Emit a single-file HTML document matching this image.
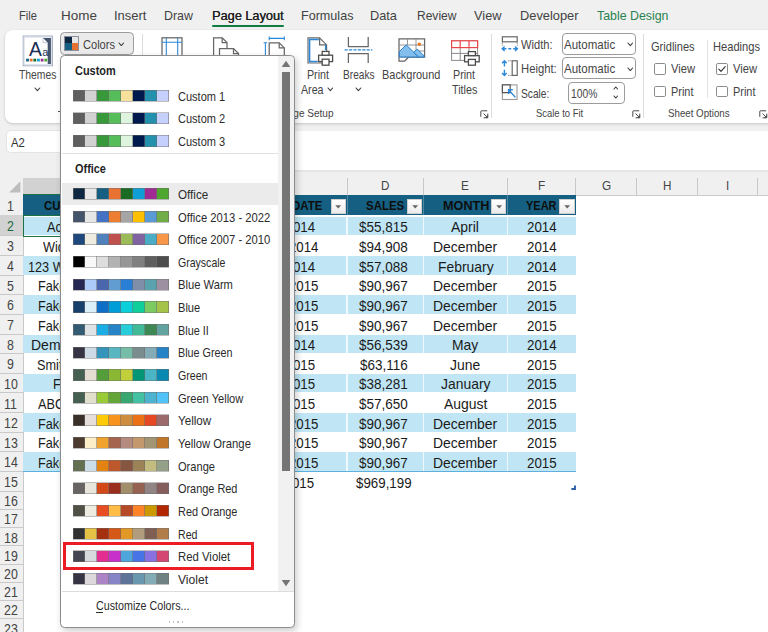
<!DOCTYPE html>
<html><head><meta charset="utf-8"><title>Excel Theme Colors</title>
<style>
html,body{margin:0;padding:0}
body{width:768px;height:632px;overflow:hidden;background:#f0f0f0;position:relative;font-family:"Liberation Sans",sans-serif}
.r{position:absolute;display:block}
.t{position:absolute;white-space:nowrap;display:block;transform-origin:0 50%}
</style></head><body>
<span class="t" style="left:18.70px;top:6.9px;font-size:13.2px;line-height:18px;transform:scaleX(0.8406);color:#424242;">File</span>
<span class="t" style="left:61.00px;top:6.9px;font-size:13.2px;line-height:18px;transform:scaleX(1.0215);color:#424242;">Home</span>
<span class="t" style="left:113.50px;top:6.9px;font-size:13.2px;line-height:18px;transform:scaleX(0.9848);color:#424242;">Insert</span>
<span class="t" style="left:164.00px;top:6.9px;font-size:13.2px;line-height:18px;transform:scaleX(0.9390);color:#424242;">Draw</span>
<span class="t" style="left:300.50px;top:6.9px;font-size:13.2px;line-height:18px;transform:scaleX(0.9538);color:#424242;">Formulas</span>
<span class="t" style="left:370.00px;top:6.9px;font-size:13.2px;line-height:18px;transform:scaleX(0.9679);color:#424242;">Data</span>
<span class="t" style="left:416.50px;top:6.9px;font-size:13.2px;line-height:18px;transform:scaleX(0.9115);color:#424242;">Review</span>
<span class="t" style="left:474.00px;top:6.9px;font-size:13.2px;line-height:18px;transform:scaleX(0.9686);color:#424242;">View</span>
<span class="t" style="left:519.50px;top:6.9px;font-size:13.2px;line-height:18px;transform:scaleX(0.9726);color:#424242;">Developer</span>
<span class="t" style="left:212.00px;top:6.9px;font-size:13.2px;line-height:18px;transform:scaleX(0.9650);color:#1f1f1f;text-shadow:0.3px 0 0 #1f1f1f;">Page Layout</span>
<div class="r" style="left:212.0px;top:25.3px;width:72.0px;height:2.0px;background:#107c41;border-radius:1px;"></div>
<span class="t" style="left:596.50px;top:6.9px;font-size:13.2px;line-height:18px;transform:scaleX(0.9367);color:#2a8250;">Table Design</span>
<div class="r" style="left:5.3px;top:29.5px;width:794.7px;height:93.5px;background:#ffffff;border-radius:8px 0 0 8px;box-shadow:0 1px 3px rgba(0,0,0,0.18);"></div>
<svg class="r" style="left:22px;top:34.5px" width="32" height="32" viewBox="0 0 32 32">
<rect x="1.2" y="1" width="29.2" height="29.8" fill="#f4f6fa" stroke="#a3adc2" stroke-width="1"/>
<rect x="2.2" y="2" width="27.2" height="27.8" fill="none" stroke="#d5dae5" stroke-width="0.9"/>
<rect x="2.8" y="3" width="23" height="26" fill="#ffffff"/>
<path d="M21 3 H28.9 V29 H25.7 V7.7 Z" fill="#44546a"/>
<path d="M21 3 V7.7 H25.7 Z" fill="#ffffff" stroke="#8a94a8" stroke-width="0.5"/>
<text x="7" y="21.3" font-family="Liberation Sans, sans-serif" font-size="19.3" fill="#1b2f55">A</text>
<text x="20.2" y="21.3" font-family="Liberation Sans, sans-serif" font-size="11" fill="#1b2f55">a</text>
<rect x="4.1" y="23.7" width="2.8" height="2.8" fill="#156082"/><rect x="7.75" y="23.7" width="2.8" height="2.8" fill="#e97132"/>
<rect x="11.4" y="23.7" width="2.8" height="2.8" fill="#196b24"/><rect x="15.05" y="23.7" width="2.8" height="2.8" fill="#0f9ed5"/>
<rect x="18.7" y="23.7" width="2.8" height="2.8" fill="#a02b93"/><rect x="22.35" y="23.7" width="2.8" height="2.8" fill="#4ea72e"/>
</svg>
<span class="t" style="left:18.80px;top:66.0px;font-size:12.6px;line-height:18px;transform:scaleX(0.8235);color:#444444;">Themes</span>
<svg class="r" style="left:33.8px;top:87.0px" width="6.8" height="4.6" viewBox="0 0 6.8 4.6"><path d="M1 1 L3.4 3.6 L5.8 1" fill="none" stroke="#3b3b3b" stroke-width="1.1" stroke-linecap="round" stroke-linejoin="round"/></svg>
<div class="r" style="left:57.5px;top:110.6px;width:3.0px;height:1.0px;background:#555;"></div>
<div class="r" style="left:60.2px;top:32.3px;width:73.7px;height:22.6px;background:#ebebeb;border:1px solid #9b9b9b;border-radius:4.5px;box-sizing:border-box;"></div>
<div class="r" style="left:64.6px;top:36.2px;width:7.0px;height:7.0px;background:#0e2841;"></div>
<div class="r" style="left:71.6px;top:36.2px;width:7.2px;height:7.0px;background:#e8e8e8;"></div>
<div class="r" style="left:64.6px;top:43.2px;width:7.0px;height:7.4px;background:#156082;"></div>
<div class="r" style="left:71.6px;top:43.2px;width:7.2px;height:7.4px;background:#e97132;"></div>
<div class="r" style="left:64.1px;top:35.7px;width:15.2px;height:15.4px;border:1px solid #8a8f99;box-sizing:border-box"></div>
<span class="t" style="left:83.00px;top:35.5px;font-size:12.6px;line-height:18px;transform:scaleX(0.8785);color:#444444;">Colors</span>
<svg class="r" style="left:117.9px;top:41.7px" width="6.6" height="4.6" viewBox="0 0 6.6 4.6"><path d="M1 1 L3.3 3.6 L5.6 1" fill="none" stroke="#3b3b3b" stroke-width="1.1" stroke-linecap="round" stroke-linejoin="round"/></svg>
<div class="r" style="left:142.0px;top:34.0px;width:1.0px;height:84.0px;background:#dcdcdc;"></div>
<div class="r" style="left:491.0px;top:34.0px;width:1.0px;height:84.0px;background:#dcdcdc;"></div>
<div class="r" style="left:643.0px;top:34.0px;width:1.0px;height:84.0px;background:#dcdcdc;"></div>
<div class="r" style="left:707.0px;top:40.0px;width:1.0px;height:58.0px;background:#e2e2e2;"></div>
<svg class="r" style="left:160px;top:36px" width="24" height="28" viewBox="0 0 24 28">
<rect x="2" y="1.8" width="20" height="27" fill="#fff" stroke="#666" stroke-width="1.25"/>
<path d="M6.3 2 V28 M17.7 2 V28 M2 6.3 H22" stroke="#2b88d8" stroke-width="1.1" fill="none"/></svg>
<svg class="r" style="left:212px;top:36px" width="30" height="28" viewBox="0 0 30 28">
<path d="M1.6 28 V1.8 H10.2 L15 6.6 V13" fill="#fff" stroke="#666" stroke-width="1.25"/>
<path d="M10.2 1.8 V6.6 H15" fill="none" stroke="#666" stroke-width="1.25"/>
<path d="M7.5 28 V12.6 H21.5 L26.5 17.6 V28" fill="#fff" stroke="#666" stroke-width="1.25"/>
<path d="M21.5 12.6 V17.6 H26.5" fill="none" stroke="#666" stroke-width="1.25"/></svg>
<svg class="r" style="left:262px;top:35px" width="26" height="28" viewBox="0 0 26 28">
<path d="M7.2 28 V7.8 H17.2 L22.3 12.9 V28" fill="#fff" stroke="#666" stroke-width="1.25"/>
<path d="M17.2 7.8 V12.9 H22.3" fill="none" stroke="#666" stroke-width="1.25"/>
<path d="M7.2 3.4 H22.3 M7.2 1.6 V5.2 M22.3 1.6 V5.2 M3.4 7.8 V28 M1.6 7.8 H5.2" stroke="#2b88d8" stroke-width="1.1" fill="none"/></svg>
<svg class="r" style="left:306px;top:36px" width="30" height="32" viewBox="0 0 30 32">
<path d="M2 1.9 H13.6 L20.6 8.9 V27 H2 Z" fill="#fff" stroke="#6b6b6b" stroke-width="1.2"/>
<path d="M13.6 1.9 V8.9 H20.6" fill="none" stroke="#666" stroke-width="1.25"/>
<path d="M12.8 3.5 H3.6 V25.4 H11.6" fill="none" stroke="#2b88d8" stroke-width="1.5"/>
<path d="M19.6 8.9 V14" stroke="#2b88d8" stroke-width="1.4"/>
<rect x="12.6" y="19.2" width="14" height="6.4" fill="#fff" stroke="#4d4d4d" stroke-width="1.3"/>
<rect x="16.2" y="15.4" width="6.8" height="3.8" fill="#fff" stroke="#4d4d4d" stroke-width="1.3"/>
<rect x="16.2" y="23.2" width="6.8" height="6" fill="#fff" stroke="#4d4d4d" stroke-width="1.3"/></svg>
<span class="t" style="left:306.80px;top:66.0px;font-size:12.6px;line-height:18px;transform:scaleX(0.8478);color:#444444;">Print</span>
<span class="t" style="left:300.90px;top:81.0px;font-size:12.6px;line-height:18px;transform:scaleX(0.8465);color:#444444;">Area</span>
<svg class="r" style="left:327.0px;top:87.3px" width="6.6" height="4.6" viewBox="0 0 6.6 4.6"><path d="M1 1 L3.3 3.6 L5.6 1" fill="none" stroke="#3b3b3b" stroke-width="1.1" stroke-linecap="round" stroke-linejoin="round"/></svg>
<svg class="r" style="left:343px;top:36px" width="32" height="28" viewBox="0 0 32 28">
<path d="M5.4 1 V10.6 H25.2 V1" fill="#fff" stroke="#666" stroke-width="1.25"/>
<path d="M5.4 27 V17.6 H25.2 V27" fill="#fff" stroke="#666" stroke-width="1.25"/>
<path d="M1.6 13.9 H29.4" stroke="#2b88d8" stroke-width="1.1" stroke-dasharray="3.2 1.2"/></svg>
<span class="t" style="left:342.80px;top:66.0px;font-size:12.6px;line-height:18px;transform:scaleX(0.8041);color:#444444;">Breaks</span>
<svg class="r" style="left:354.8px;top:87.0px" width="6.8" height="4.6" viewBox="0 0 6.8 4.6"><path d="M1 1 L3.4 3.6 L5.8 1" fill="none" stroke="#3b3b3b" stroke-width="1.1" stroke-linecap="round" stroke-linejoin="round"/></svg>
<svg class="r" style="left:397px;top:37px" width="30" height="26" viewBox="0 0 30 26">
<path d="M2 1.8 H27.6 V20.2 H11.4 L7.6 24.2 H2 Z" fill="#fff" stroke="#666" stroke-width="1.25"/>
<path d="M10.5 1.8 V8 M19 1.8 V20 M2 8 H27.6 M19 14 H27.6 M2 20.2 H12" stroke="#8a8a8a" stroke-width="0.9" fill="none"/>
<path d="M2.4 20 V14.6 L9.2 7.8 L21.6 20 Z" fill="#83beec" stroke="#1e78c8" stroke-width="0.9"/>
<path d="M16.6 15.4 L20.2 12 L27.2 19 V20 H21.6 Z" fill="#83beec" stroke="#1e78c8" stroke-width="0.9"/>
<circle cx="22.3" cy="7.3" r="1.7" fill="#e8781e"/></svg>
<span class="t" style="left:381.80px;top:66.0px;font-size:12.6px;line-height:18px;transform:scaleX(0.8685);color:#444444;">Background</span>
<svg class="r" style="left:450px;top:39px" width="32" height="28" viewBox="0 0 32 28">
<rect x="1.6" y="1.8" width="26" height="19.6" fill="#fff" stroke="#8a8a8a" stroke-width="1"/>
<path d="M10.2 1.8 V21.4 M19 1.8 V21.4 M1.6 14.4 H27.6" stroke="#8a8a8a" stroke-width="1" fill="none"/>
<rect x="1.6" y="1.8" width="26" height="6.8" fill="#fff" stroke="#e8474c" stroke-width="1.2"/>
<path d="M10.2 1.8 V8.6 M19 1.8 V8.6" stroke="#e8474c" stroke-width="1.2"/>
<rect x="14.6" y="16.6" width="14.6" height="6.2" fill="#fff" stroke="#4d4d4d" stroke-width="1.3"/>
<rect x="18.4" y="12.6" width="7" height="4" fill="#fff" stroke="#4d4d4d" stroke-width="1.3"/>
<rect x="18.4" y="20.4" width="7" height="5.8" fill="#fff" stroke="#4d4d4d" stroke-width="1.3"/></svg>
<span class="t" style="left:453.40px;top:66.0px;font-size:12.6px;line-height:18px;transform:scaleX(0.8517);color:#444444;">Print</span>
<span class="t" style="left:451.50px;top:81.0px;font-size:12.6px;line-height:18px;transform:scaleX(0.8588);color:#444444;">Titles</span>
<svg class="r" style="left:479.5px;top:109.8px" width="10" height="10" viewBox="0 0 10 10">
<path d="M0.8 6.8 V1.4 Q0.8 0.8 1.4 0.8 H7.2" fill="none" stroke="#4a4a4a" stroke-width="1"/>
<path d="M3.5 3.5 L7 7" fill="none" stroke="#4a4a4a" stroke-width="1"/>
<path d="M7.8 3.6 V7.8 H3.6" fill="none" stroke="#4a4a4a" stroke-width="1"/>
<path d="M7.8 5 V7.8 H5 Z" fill="#4a4a4a"/></svg>
<svg class="r" style="left:631.5px;top:109.8px" width="10" height="10" viewBox="0 0 10 10">
<path d="M0.8 6.8 V1.4 Q0.8 0.8 1.4 0.8 H7.2" fill="none" stroke="#4a4a4a" stroke-width="1"/>
<path d="M3.5 3.5 L7 7" fill="none" stroke="#4a4a4a" stroke-width="1"/>
<path d="M7.8 3.6 V7.8 H3.6" fill="none" stroke="#4a4a4a" stroke-width="1"/>
<path d="M7.8 5 V7.8 H5 Z" fill="#4a4a4a"/></svg>
<svg class="r" style="left:759.3px;top:109.8px" width="10" height="10" viewBox="0 0 10 10">
<path d="M0.8 6.8 V1.4 Q0.8 0.8 1.4 0.8 H7.2" fill="none" stroke="#4a4a4a" stroke-width="1"/>
<path d="M3.5 3.5 L7 7" fill="none" stroke="#4a4a4a" stroke-width="1"/>
<path d="M7.8 3.6 V7.8 H3.6" fill="none" stroke="#4a4a4a" stroke-width="1"/>
<path d="M7.8 5 V7.8 H5 Z" fill="#4a4a4a"/></svg>
<span class="t" style="left:280.50px;top:105.9px;font-size:10.8px;line-height:15px;transform:scaleX(0.9311);color:#444444;">Page Setup</span>
<span class="t" style="left:535.50px;top:105.9px;font-size:10.8px;line-height:15px;transform:scaleX(0.8741);color:#444444;">Scale to Fit</span>
<span class="t" style="left:668.40px;top:105.9px;font-size:10.8px;line-height:15px;transform:scaleX(0.9000);color:#444444;">Sheet Options</span>
<svg class="r" style="left:500px;top:35px" width="20" height="18" viewBox="0 0 20 18">
<rect x="2.4" y="1.8" width="14.8" height="5" fill="#fff" stroke="#666" stroke-width="1.2"/>
<path d="M2.4 7.4 V10.6 M17.2 7.4 V10.6" stroke="#777" stroke-width="1" stroke-dasharray="1.3 0.9"/>
<path d="M2.2 13.7 H6.4 M8.4 13.7 H11.2 M13.2 13.7 H17.4 M4.6 11.4 L2.2 13.7 L4.6 16 M15 11.4 L17.4 13.7 L15 16" fill="none" stroke="#2b88d8" stroke-width="1.4"/></svg>
<svg class="r" style="left:500px;top:59px" width="20" height="18" viewBox="0 0 20 18">
<rect x="12.2" y="1.8" width="5" height="14.6" fill="#fff" stroke="#666" stroke-width="1.2"/>
<path d="M8.2 1.8 H11.6 M8.2 16.4 H11.6" stroke="#777" stroke-width="1" stroke-dasharray="1.3 0.9"/>
<path d="M4.4 1.8 V7.4 M4.4 10.8 V16.4 M2.1 4.2 L4.4 1.8 L6.7 4.2 M2.1 14 L4.4 16.4 L6.7 14" fill="none" stroke="#2b88d8" stroke-width="1.4"/></svg>
<svg class="r" style="left:500px;top:83px" width="20" height="18" viewBox="0 0 20 18">
<rect x="2.4" y="1.9" width="14.6" height="14.6" fill="#fff" stroke="#9a9a9a" stroke-width="1.1"/>
<path d="M2.4 9.6 H10.2 V1.9 H2.4 Z" fill="#fff" stroke="#555" stroke-width="1.2"/>
<path d="M15.4 14.4 L8.8 7 M8.6 11 V6.8 H12.8" fill="none" stroke="#2b88d8" stroke-width="1.4"/></svg>
<span class="t" style="left:521.00px;top:35.7px;font-size:12.6px;line-height:18px;transform:scaleX(0.8829);color:#444444;">Width:</span>
<span class="t" style="left:521.00px;top:59.5px;font-size:12.6px;line-height:18px;transform:scaleX(0.8943);color:#444444;">Height:</span>
<span class="t" style="left:521.00px;top:84.5px;font-size:12.6px;line-height:18px;transform:scaleX(0.8101);color:#444444;">Scale:</span>
<div class="r" style="left:561.5px;top:32.6px;width:74.0px;height:22.0px;background:#fff;border:1px solid #9c9c9c;border-radius:4px;box-sizing:border-box;"></div>
<div class="r" style="left:561.5px;top:57.2px;width:74.0px;height:22.0px;background:#fff;border:1px solid #9c9c9c;border-radius:4px;box-sizing:border-box;"></div>
<div class="r" style="left:568.3px;top:81.5px;width:57.0px;height:22.0px;background:#fff;border:1px solid #9c9c9c;border-radius:4px;box-sizing:border-box;"></div>
<span class="t" style="left:564.20px;top:35.7px;font-size:12.6px;line-height:18px;transform:scaleX(0.9141);color:#444444;">Automatic</span>
<span class="t" style="left:564.20px;top:59.9px;font-size:12.6px;line-height:18px;transform:scaleX(0.9141);color:#444444;">Automatic</span>
<span class="t" style="left:571.00px;top:84.5px;font-size:12.6px;line-height:18px;transform:scaleX(0.8171);color:#444444;">100%</span>
<svg class="r" style="left:626.7px;top:42.1px" width="6.6" height="4.6" viewBox="0 0 6.6 4.6"><path d="M1 1 L3.3 3.6 L5.6 1" fill="none" stroke="#3b3b3b" stroke-width="1.1" stroke-linecap="round" stroke-linejoin="round"/></svg>
<svg class="r" style="left:626.7px;top:66.5px" width="6.6" height="4.6" viewBox="0 0 6.6 4.6"><path d="M1 1 L3.3 3.6 L5.6 1" fill="none" stroke="#3b3b3b" stroke-width="1.1" stroke-linecap="round" stroke-linejoin="round"/></svg>
<svg class="r" style="left:612.8px;top:85.6px" width="5.6" height="4.0" viewBox="0 0 5.6 4.0"><path d="M1 3.0 L2.8 1 L4.6 3.0" fill="none" stroke="#3b3b3b" stroke-width="1.1" stroke-linecap="round" stroke-linejoin="round"/></svg>
<svg class="r" style="left:612.8px;top:95.2px" width="5.6" height="4.0" viewBox="0 0 5.6 4.0"><path d="M1 1 L2.8 3.0 L4.6 1" fill="none" stroke="#3b3b3b" stroke-width="1.1" stroke-linecap="round" stroke-linejoin="round"/></svg>
<span class="t" style="left:651.00px;top:37.7px;font-size:12.6px;line-height:18px;transform:scaleX(0.8779);color:#444444;">Gridlines</span>
<span class="t" style="left:713.20px;top:37.7px;font-size:12.6px;line-height:18px;transform:scaleX(0.8842);color:#444444;">Headings</span>
<div class="r" style="left:654.2px;top:62.8px;width:11.8px;height:11.8px;background:#fff;border:1px solid #8c8c8c;border-radius:1.8px;box-sizing:border-box;"></div>
<div class="r" style="left:654.2px;top:85.5px;width:11.8px;height:11.8px;background:#fff;border:1px solid #8c8c8c;border-radius:1.8px;box-sizing:border-box;"></div>
<div class="r" style="left:716.2px;top:62.8px;width:11.8px;height:11.8px;background:#fff;border:1px solid #8c8c8c;border-radius:1.8px;box-sizing:border-box;"></div>
<div class="r" style="left:716.2px;top:85.5px;width:11.8px;height:11.8px;background:#fff;border:1px solid #8c8c8c;border-radius:1.8px;box-sizing:border-box;"></div>
<svg class="r" style="left:716.2px;top:62.8px" width="12" height="12" viewBox="0 0 12 12"><path d="M2.8 6.2 L5 8.3 L9.2 3.6" fill="none" stroke="#333" stroke-width="1.1" stroke-linecap="round" stroke-linejoin="round"/></svg>
<span class="t" style="left:670.60px;top:59.8px;font-size:12.6px;line-height:18px;transform:scaleX(0.8862);color:#444444;">View</span>
<span class="t" style="left:670.80px;top:82.7px;font-size:12.6px;line-height:18px;transform:scaleX(0.8671);color:#444444;">Print</span>
<span class="t" style="left:732.60px;top:59.8px;font-size:12.6px;line-height:18px;transform:scaleX(0.8862);color:#444444;">View</span>
<span class="t" style="left:732.80px;top:82.7px;font-size:12.6px;line-height:18px;transform:scaleX(0.8671);color:#444444;">Print</span>
<div class="r" style="left:5.6px;top:130.3px;width:194.4px;height:23.0px;background:#fff;border-radius:5px;border:1px solid #e4e4e4;box-sizing:border-box;"></div>
<span class="t" style="left:10.80px;top:134.0px;font-size:12.8px;line-height:18px;transform:scaleX(0.8861);color:#333;">A2</span>
<div class="r" style="left:230.0px;top:130.6px;width:570.0px;height:40.4px;background:#fff;border-radius:4px 0 0 0;"></div>
<div class="r" style="left:230.0px;top:170.4px;width:570.0px;height:1.2px;background:#e6e6e6;"></div>
<div class="r" style="left:23.4px;top:195.0px;width:776.6px;height:445.0px;background:#fff;"></div>
<div class="r" style="left:0.0px;top:177.5px;width:23.4px;height:462.5px;background:#f0f0f0;"></div>
<div class="r" style="left:23.0px;top:195.0px;width:1.0px;height:445.0px;background:#c9c9c9;"></div>
<div class="r" style="left:0.0px;top:214.8px;width:23.4px;height:1.0px;background:#c9c9c9;"></div>
<span class="t" style="left:7.17px;top:196.8px;font-size:13.8px;line-height:19px;transform:scaleX(0.8960);color:#444;">1</span>
<div class="r" style="left:0.0px;top:215.3px;width:23.2px;height:20.4px;background:#d2d2d2;"></div>
<div class="r" style="left:0.0px;top:235.2px;width:23.4px;height:1.0px;background:#c9c9c9;"></div>
<span class="t" style="left:7.17px;top:217.3px;font-size:13.8px;line-height:19px;transform:scaleX(0.8960);color:#1e6b41;">2</span>
<div class="r" style="left:0.0px;top:255.1px;width:23.4px;height:1.0px;background:#c9c9c9;"></div>
<span class="t" style="left:7.17px;top:237.4px;font-size:13.8px;line-height:19px;transform:scaleX(0.8960);color:#444;">3</span>
<div class="r" style="left:0.0px;top:274.7px;width:23.4px;height:1.0px;background:#c9c9c9;"></div>
<span class="t" style="left:7.17px;top:257.2px;font-size:13.8px;line-height:19px;transform:scaleX(0.8960);color:#444;">4</span>
<div class="r" style="left:0.0px;top:294.3px;width:23.4px;height:1.0px;background:#c9c9c9;"></div>
<span class="t" style="left:7.17px;top:276.8px;font-size:13.8px;line-height:19px;transform:scaleX(0.8960);color:#444;">5</span>
<div class="r" style="left:0.0px;top:314.0px;width:23.4px;height:1.0px;background:#c9c9c9;"></div>
<span class="t" style="left:7.17px;top:296.4px;font-size:13.8px;line-height:19px;transform:scaleX(0.8960);color:#444;">6</span>
<div class="r" style="left:0.0px;top:333.6px;width:23.4px;height:1.0px;background:#c9c9c9;"></div>
<span class="t" style="left:7.17px;top:316.1px;font-size:13.8px;line-height:19px;transform:scaleX(0.8960);color:#444;">7</span>
<div class="r" style="left:0.0px;top:353.2px;width:23.4px;height:1.0px;background:#c9c9c9;"></div>
<span class="t" style="left:7.17px;top:335.7px;font-size:13.8px;line-height:19px;transform:scaleX(0.8960);color:#444;">8</span>
<div class="r" style="left:0.0px;top:372.8px;width:23.4px;height:1.0px;background:#c9c9c9;"></div>
<span class="t" style="left:7.17px;top:355.3px;font-size:13.8px;line-height:19px;transform:scaleX(0.8960);color:#444;">9</span>
<div class="r" style="left:0.0px;top:392.4px;width:23.4px;height:1.0px;background:#c9c9c9;"></div>
<span class="t" style="left:3.74px;top:374.9px;font-size:13.8px;line-height:19px;transform:scaleX(0.8960);color:#444;">10</span>
<div class="r" style="left:0.0px;top:412.1px;width:23.4px;height:1.0px;background:#c9c9c9;"></div>
<span class="t" style="left:4.20px;top:394.6px;font-size:13.8px;line-height:19px;transform:scaleX(0.8950);color:#444;">11</span>
<div class="r" style="left:0.0px;top:431.7px;width:23.4px;height:1.0px;background:#c9c9c9;"></div>
<span class="t" style="left:3.74px;top:414.2px;font-size:13.8px;line-height:19px;transform:scaleX(0.8960);color:#444;">12</span>
<div class="r" style="left:0.0px;top:451.3px;width:23.4px;height:1.0px;background:#c9c9c9;"></div>
<span class="t" style="left:3.74px;top:433.8px;font-size:13.8px;line-height:19px;transform:scaleX(0.8960);color:#444;">13</span>
<div class="r" style="left:0.0px;top:470.9px;width:23.4px;height:1.0px;background:#c9c9c9;"></div>
<span class="t" style="left:3.74px;top:453.4px;font-size:13.8px;line-height:19px;transform:scaleX(0.8960);color:#444;">14</span>
<div class="r" style="left:0.0px;top:490.7px;width:23.4px;height:1.0px;background:#c9c9c9;"></div>
<span class="t" style="left:3.74px;top:473.1px;font-size:13.8px;line-height:19px;transform:scaleX(0.8960);color:#444;">15</span>
<div class="r" style="left:0.0px;top:508.9px;width:23.4px;height:1.0px;background:#c9c9c9;"></div>
<span class="t" style="left:3.74px;top:492.1px;font-size:13.8px;line-height:19px;transform:scaleX(0.8960);color:#444;">16</span>
<div class="r" style="left:0.0px;top:527.1px;width:23.4px;height:1.0px;background:#c9c9c9;"></div>
<span class="t" style="left:3.74px;top:510.3px;font-size:13.8px;line-height:19px;transform:scaleX(0.8960);color:#444;">17</span>
<div class="r" style="left:0.0px;top:545.3px;width:23.4px;height:1.0px;background:#c9c9c9;"></div>
<span class="t" style="left:3.74px;top:528.5px;font-size:13.8px;line-height:19px;transform:scaleX(0.8960);color:#444;">18</span>
<div class="r" style="left:0.0px;top:563.5px;width:23.4px;height:1.0px;background:#c9c9c9;"></div>
<span class="t" style="left:3.74px;top:546.7px;font-size:13.8px;line-height:19px;transform:scaleX(0.8960);color:#444;">19</span>
<div class="r" style="left:0.0px;top:581.7px;width:23.4px;height:1.0px;background:#c9c9c9;"></div>
<span class="t" style="left:3.74px;top:564.9px;font-size:13.8px;line-height:19px;transform:scaleX(0.8960);color:#444;">20</span>
<div class="r" style="left:0.0px;top:599.9px;width:23.4px;height:1.0px;background:#c9c9c9;"></div>
<span class="t" style="left:3.74px;top:583.1px;font-size:13.8px;line-height:19px;transform:scaleX(0.8960);color:#444;">21</span>
<div class="r" style="left:0.0px;top:618.1px;width:23.4px;height:1.0px;background:#c9c9c9;"></div>
<span class="t" style="left:3.74px;top:601.3px;font-size:13.8px;line-height:19px;transform:scaleX(0.8960);color:#444;">22</span>
<div class="r" style="left:0.0px;top:636.3px;width:23.4px;height:1.0px;background:#c9c9c9;"></div>
<span class="t" style="left:3.74px;top:619.5px;font-size:13.8px;line-height:19px;transform:scaleX(0.8960);color:#444;">23</span>
<div class="r" style="left:0.0px;top:654.5px;width:23.4px;height:1.0px;background:#c9c9c9;"></div>
<span class="t" style="left:3.74px;top:637.7px;font-size:13.8px;line-height:19px;transform:scaleX(0.8960);color:#444;">24</span>
<div class="r" style="left:0.0px;top:672.7px;width:23.4px;height:1.0px;background:#c9c9c9;"></div>
<span class="t" style="left:3.74px;top:655.9px;font-size:13.8px;line-height:19px;transform:scaleX(0.8960);color:#444;">25</span>
<svg class="r" style="left:8px;top:180px" width="14" height="14" viewBox="0 0 14 14"><path d="M12.4 1.2 V12.4 H1.2 Z" fill="#bdbdbd"/></svg>
<div class="r" style="left:23.4px;top:177.5px;width:126.6px;height:16.5px;background:#d2d2d2;"></div>
<div class="r" style="left:23.4px;top:193.6px;width:126.6px;height:1.6px;background:#1e7145;"></div>
<div class="r" style="left:150.0px;top:194.6px;width:650.0px;height:1.0px;background:#cbcbcb;"></div>
<div class="r" style="left:149.5px;top:177.5px;width:1.0px;height:17.5px;background:#c9c9c9;"></div>
<div class="r" style="left:222.5px;top:177.5px;width:1.0px;height:17.5px;background:#c9c9c9;"></div>
<div class="r" style="left:346.5px;top:177.5px;width:1.0px;height:17.5px;background:#c9c9c9;"></div>
<div class="r" style="left:422.9px;top:177.5px;width:1.0px;height:17.5px;background:#c9c9c9;"></div>
<span class="t" style="left:380.95px;top:178.3px;font-size:12.4px;line-height:17px;transform:scaleX(0.9434);color:#444;">D</span>
<div class="r" style="left:506.9px;top:177.5px;width:1.0px;height:17.5px;background:#c9c9c9;"></div>
<span class="t" style="left:461.47px;top:178.3px;font-size:12.4px;line-height:17px;transform:scaleX(0.9504);color:#444;">E</span>
<div class="r" style="left:575.1px;top:177.5px;width:1.0px;height:17.5px;background:#c9c9c9;"></div>
<span class="t" style="left:537.90px;top:178.3px;font-size:12.4px;line-height:17px;transform:scaleX(0.9574);color:#444;">F</span>
<div class="r" style="left:636.1px;top:177.5px;width:1.0px;height:17.5px;background:#c9c9c9;"></div>
<span class="t" style="left:601.52px;top:178.3px;font-size:12.4px;line-height:17px;transform:scaleX(0.9500);color:#444;">G</span>
<div class="r" style="left:696.5px;top:177.5px;width:1.0px;height:17.5px;background:#c9c9c9;"></div>
<span class="t" style="left:662.55px;top:178.3px;font-size:12.4px;line-height:17px;transform:scaleX(0.9434);color:#444;">H</span>
<div class="r" style="left:756.9px;top:177.5px;width:1.0px;height:17.5px;background:#c9c9c9;"></div>
<span class="t" style="left:725.56px;top:178.3px;font-size:12.4px;line-height:17px;transform:scaleX(0.9330);color:#444;">I</span>
<div class="r" style="left:819.5px;top:177.5px;width:1.0px;height:17.5px;background:#c9c9c9;"></div>
<div class="r" style="left:23.4px;top:195.2px;width:552.2px;height:19.4px;background:#156082;"></div>
<div class="r" style="left:23.4px;top:216.9px;width:552.2px;height:18.4px;background:#c0e6f5;"></div>
<div class="r" style="left:23.4px;top:256.0px;width:552.2px;height:18.8px;background:#c0e6f5;"></div>
<div class="r" style="left:23.4px;top:295.2px;width:552.2px;height:18.8px;background:#c0e6f5;"></div>
<div class="r" style="left:23.4px;top:334.5px;width:552.2px;height:18.8px;background:#c0e6f5;"></div>
<div class="r" style="left:23.4px;top:373.7px;width:552.2px;height:18.8px;background:#c0e6f5;"></div>
<div class="r" style="left:23.4px;top:413.0px;width:552.2px;height:18.8px;background:#c0e6f5;"></div>
<div class="r" style="left:23.4px;top:452.2px;width:552.2px;height:18.8px;background:#c0e6f5;"></div>
<div class="r" style="left:149.4px;top:214.6px;width:1.2px;height:256.8px;background:#fff;opacity:0.75;"></div>
<div class="r" style="left:149.5px;top:195.2px;width:1.0px;height:19.4px;background:#fff;opacity:0.25;"></div>
<div class="r" style="left:222.4px;top:214.6px;width:1.2px;height:256.8px;background:#fff;opacity:0.75;"></div>
<div class="r" style="left:222.5px;top:195.2px;width:1.0px;height:19.4px;background:#fff;opacity:0.25;"></div>
<div class="r" style="left:346.4px;top:214.6px;width:1.2px;height:256.8px;background:#fff;opacity:0.75;"></div>
<div class="r" style="left:346.5px;top:195.2px;width:1.0px;height:19.4px;background:#fff;opacity:0.25;"></div>
<div class="r" style="left:422.8px;top:214.6px;width:1.2px;height:256.8px;background:#fff;opacity:0.75;"></div>
<div class="r" style="left:422.9px;top:195.2px;width:1.0px;height:19.4px;background:#fff;opacity:0.25;"></div>
<div class="r" style="left:506.8px;top:214.6px;width:1.2px;height:256.8px;background:#fff;opacity:0.75;"></div>
<div class="r" style="left:506.9px;top:195.2px;width:1.0px;height:19.4px;background:#fff;opacity:0.25;"></div>
<div class="r" style="left:23.4px;top:470.7px;width:552.2px;height:1.2px;background:#5fb0de;"></div>
<div class="r" style="left:22.6px;top:214.9px;width:128px;height:22.0px;border:1.6px solid #1e7145;box-sizing:border-box"></div>
<div class="r" style="left:133.8px;top:198.5px;width:15.2px;height:15.6px;background:linear-gradient(#ffffff,#ececec);border:1px solid #cfcfcf;box-sizing:border-box;"></div>
<svg class="r" style="left:138.4px;top:204.8px" width="7" height="4" viewBox="0 0 7 4"><path d="M0.3 0.3 H6.1 L3.2 3.5 Z" fill="#666"/></svg>
<div class="r" style="left:206.8px;top:198.5px;width:15.2px;height:15.6px;background:linear-gradient(#ffffff,#ececec);border:1px solid #cfcfcf;box-sizing:border-box;"></div>
<svg class="r" style="left:211.4px;top:204.8px" width="7" height="4" viewBox="0 0 7 4"><path d="M0.3 0.3 H6.1 L3.2 3.5 Z" fill="#666"/></svg>
<div class="r" style="left:330.8px;top:198.5px;width:15.2px;height:15.6px;background:linear-gradient(#ffffff,#ececec);border:1px solid #cfcfcf;box-sizing:border-box;"></div>
<svg class="r" style="left:335.4px;top:204.8px" width="7" height="4" viewBox="0 0 7 4"><path d="M0.3 0.3 H6.1 L3.2 3.5 Z" fill="#666"/></svg>
<div class="r" style="left:407.2px;top:198.5px;width:15.2px;height:15.6px;background:linear-gradient(#ffffff,#ececec);border:1px solid #cfcfcf;box-sizing:border-box;"></div>
<svg class="r" style="left:411.8px;top:204.8px" width="7" height="4" viewBox="0 0 7 4"><path d="M0.3 0.3 H6.1 L3.2 3.5 Z" fill="#666"/></svg>
<div class="r" style="left:491.2px;top:198.5px;width:15.2px;height:15.6px;background:linear-gradient(#ffffff,#ececec);border:1px solid #cfcfcf;box-sizing:border-box;"></div>
<svg class="r" style="left:495.8px;top:204.8px" width="7" height="4" viewBox="0 0 7 4"><path d="M0.3 0.3 H6.1 L3.2 3.5 Z" fill="#666"/></svg>
<div class="r" style="left:559.4px;top:198.5px;width:15.2px;height:15.6px;background:linear-gradient(#ffffff,#ececec);border:1px solid #cfcfcf;box-sizing:border-box;"></div>
<svg class="r" style="left:564.0px;top:204.8px" width="7" height="4" viewBox="0 0 7 4"><path d="M0.3 0.3 H6.1 L3.2 3.5 Z" fill="#666"/></svg>
<span class="t" style="left:43.70px;top:196.1px;font-size:13.6px;line-height:19px;transform:scaleX(0.8427);color:#0d0d0d;font-weight:bold;">CUSTOMER NAME</span>
<span class="t" style="left:292.00px;top:196.1px;font-size:13.6px;line-height:19px;transform:scaleX(0.8458);color:#0d0d0d;font-weight:bold;">DATE</span>
<span class="t" style="left:365.80px;top:196.1px;font-size:13.6px;line-height:19px;transform:scaleX(0.8434);color:#0d0d0d;font-weight:bold;">SALES</span>
<span class="t" style="left:442.50px;top:196.1px;font-size:13.6px;line-height:19px;transform:scaleX(0.9317);color:#0d0d0d;font-weight:bold;">MONTH</span>
<span class="t" style="left:526.00px;top:196.1px;font-size:13.6px;line-height:19px;transform:scaleX(0.8094);color:#0d0d0d;font-weight:bold;">YEAR</span>
<span class="t" style="left:46.80px;top:216.7px;font-size:14.6px;line-height:20px;transform:scaleX(0.8702);color:#1a1a1a;">Acme, inc.</span>
<span class="t" style="left:255.60px;top:216.7px;font-size:14.6px;line-height:20px;transform:scaleX(0.9108);color:#1a1a1a;">4/28/2014</span>
<span class="t" style="left:359.49px;top:216.7px;font-size:14.6px;line-height:20px;transform:scaleX(0.9247);color:#1a1a1a;">$55,815</span>
<span class="t" style="left:451.45px;top:216.7px;font-size:14.6px;line-height:20px;transform:scaleX(0.9553);color:#1a1a1a;">April</span>
<span class="t" style="left:526.62px;top:216.7px;font-size:14.6px;line-height:20px;transform:scaleX(0.9109);color:#1a1a1a;">2014</span>
<span class="t" style="left:43.00px;top:236.8px;font-size:14.6px;line-height:20px;transform:scaleX(0.8703);color:#1a1a1a;">Widget Corp</span>
<span class="t" style="left:251.71px;top:236.8px;font-size:14.6px;line-height:20px;transform:scaleX(0.9092);color:#1a1a1a;">12/15/2014</span>
<span class="t" style="left:359.49px;top:236.8px;font-size:14.6px;line-height:20px;transform:scaleX(0.9247);color:#1a1a1a;">$94,908</span>
<span class="t" style="left:433.24px;top:236.8px;font-size:14.6px;line-height:20px;transform:scaleX(0.9544);color:#1a1a1a;">December</span>
<span class="t" style="left:526.62px;top:236.8px;font-size:14.6px;line-height:20px;transform:scaleX(0.9109);color:#1a1a1a;">2014</span>
<span class="t" style="left:28.00px;top:256.6px;font-size:14.6px;line-height:20px;transform:scaleX(0.8697);color:#1a1a1a;">123 Warehousing</span>
<span class="t" style="left:255.60px;top:256.6px;font-size:14.6px;line-height:20px;transform:scaleX(0.9108);color:#1a1a1a;">2/28/2014</span>
<span class="t" style="left:359.49px;top:256.6px;font-size:14.6px;line-height:20px;transform:scaleX(0.9247);color:#1a1a1a;">$57,088</span>
<span class="t" style="left:437.50px;top:256.6px;font-size:14.6px;line-height:20px;transform:scaleX(0.9533);color:#1a1a1a;">February</span>
<span class="t" style="left:526.62px;top:256.6px;font-size:14.6px;line-height:20px;transform:scaleX(0.9109);color:#1a1a1a;">2014</span>
<span class="t" style="left:37.70px;top:276.2px;font-size:14.6px;line-height:20px;transform:scaleX(0.8697);color:#1a1a1a;">Fake Brothers</span>
<span class="t" style="left:251.71px;top:276.2px;font-size:14.6px;line-height:20px;transform:scaleX(0.9092);color:#1a1a1a;">12/31/2015</span>
<span class="t" style="left:359.49px;top:276.2px;font-size:14.6px;line-height:20px;transform:scaleX(0.9247);color:#1a1a1a;">$90,967</span>
<span class="t" style="left:433.24px;top:276.2px;font-size:14.6px;line-height:20px;transform:scaleX(0.9544);color:#1a1a1a;">December</span>
<span class="t" style="left:526.62px;top:276.2px;font-size:14.6px;line-height:20px;transform:scaleX(0.9109);color:#1a1a1a;">2015</span>
<span class="t" style="left:37.70px;top:295.8px;font-size:14.6px;line-height:20px;transform:scaleX(0.8697);color:#1a1a1a;">Fake Brothers</span>
<span class="t" style="left:251.71px;top:295.8px;font-size:14.6px;line-height:20px;transform:scaleX(0.9092);color:#1a1a1a;">12/31/2015</span>
<span class="t" style="left:359.49px;top:295.8px;font-size:14.6px;line-height:20px;transform:scaleX(0.9247);color:#1a1a1a;">$90,967</span>
<span class="t" style="left:433.24px;top:295.8px;font-size:14.6px;line-height:20px;transform:scaleX(0.9544);color:#1a1a1a;">December</span>
<span class="t" style="left:526.62px;top:295.8px;font-size:14.6px;line-height:20px;transform:scaleX(0.9109);color:#1a1a1a;">2015</span>
<span class="t" style="left:37.70px;top:315.5px;font-size:14.6px;line-height:20px;transform:scaleX(0.8697);color:#1a1a1a;">Fake Brothers</span>
<span class="t" style="left:251.71px;top:315.5px;font-size:14.6px;line-height:20px;transform:scaleX(0.9092);color:#1a1a1a;">12/31/2015</span>
<span class="t" style="left:359.49px;top:315.5px;font-size:14.6px;line-height:20px;transform:scaleX(0.9247);color:#1a1a1a;">$90,967</span>
<span class="t" style="left:433.24px;top:315.5px;font-size:14.6px;line-height:20px;transform:scaleX(0.9544);color:#1a1a1a;">December</span>
<span class="t" style="left:526.62px;top:315.5px;font-size:14.6px;line-height:20px;transform:scaleX(0.9109);color:#1a1a1a;">2015</span>
<span class="t" style="left:30.80px;top:335.1px;font-size:14.6px;line-height:20px;transform:scaleX(0.9592);color:#1a1a1a;">Demo Company</span>
<span class="t" style="left:255.60px;top:335.1px;font-size:14.6px;line-height:20px;transform:scaleX(0.9108);color:#1a1a1a;">5/12/2014</span>
<span class="t" style="left:359.49px;top:335.1px;font-size:14.6px;line-height:20px;transform:scaleX(0.9247);color:#1a1a1a;">$56,539</span>
<span class="t" style="left:452.23px;top:335.1px;font-size:14.6px;line-height:20px;transform:scaleX(0.9508);color:#1a1a1a;">May</span>
<span class="t" style="left:526.62px;top:335.1px;font-size:14.6px;line-height:20px;transform:scaleX(0.9109);color:#1a1a1a;">2014</span>
<span class="t" style="left:37.20px;top:354.7px;font-size:14.6px;line-height:20px;transform:scaleX(0.8704);color:#1a1a1a;">Smith and Co.</span>
<span class="t" style="left:255.60px;top:354.7px;font-size:14.6px;line-height:20px;transform:scaleX(0.9108);color:#1a1a1a;">6/15/2015</span>
<span class="t" style="left:360.00px;top:354.7px;font-size:14.6px;line-height:20px;transform:scaleX(0.9254);color:#1a1a1a;">$63,116</span>
<span class="t" style="left:450.28px;top:354.7px;font-size:14.6px;line-height:20px;transform:scaleX(0.9538);color:#1a1a1a;">June</span>
<span class="t" style="left:526.62px;top:354.7px;font-size:14.6px;line-height:20px;transform:scaleX(0.9109);color:#1a1a1a;">2015</span>
<span class="t" style="left:53.30px;top:374.3px;font-size:14.6px;line-height:20px;transform:scaleX(0.8694);color:#1a1a1a;">Foo Bars</span>
<span class="t" style="left:255.60px;top:374.3px;font-size:14.6px;line-height:20px;transform:scaleX(0.9108);color:#1a1a1a;">1/15/2015</span>
<span class="t" style="left:359.49px;top:374.3px;font-size:14.6px;line-height:20px;transform:scaleX(0.9247);color:#1a1a1a;">$38,281</span>
<span class="t" style="left:440.60px;top:374.3px;font-size:14.6px;line-height:20px;transform:scaleX(0.9532);color:#1a1a1a;">January</span>
<span class="t" style="left:526.62px;top:374.3px;font-size:14.6px;line-height:20px;transform:scaleX(0.9109);color:#1a1a1a;">2015</span>
<span class="t" style="left:37.60px;top:393.9px;font-size:14.6px;line-height:20px;transform:scaleX(0.8695);color:#1a1a1a;">ABC Telecom</span>
<span class="t" style="left:255.60px;top:393.9px;font-size:14.6px;line-height:20px;transform:scaleX(0.9108);color:#1a1a1a;">8/15/2015</span>
<span class="t" style="left:359.49px;top:393.9px;font-size:14.6px;line-height:20px;transform:scaleX(0.9247);color:#1a1a1a;">$57,650</span>
<span class="t" style="left:443.70px;top:393.9px;font-size:14.6px;line-height:20px;transform:scaleX(0.9556);color:#1a1a1a;">August</span>
<span class="t" style="left:526.62px;top:393.9px;font-size:14.6px;line-height:20px;transform:scaleX(0.9109);color:#1a1a1a;">2015</span>
<span class="t" style="left:37.60px;top:413.6px;font-size:14.6px;line-height:20px;transform:scaleX(0.8697);color:#1a1a1a;">Fake Brothers</span>
<span class="t" style="left:251.71px;top:413.6px;font-size:14.6px;line-height:20px;transform:scaleX(0.9092);color:#1a1a1a;">12/31/2015</span>
<span class="t" style="left:359.49px;top:413.6px;font-size:14.6px;line-height:20px;transform:scaleX(0.9247);color:#1a1a1a;">$90,967</span>
<span class="t" style="left:433.24px;top:413.6px;font-size:14.6px;line-height:20px;transform:scaleX(0.9544);color:#1a1a1a;">December</span>
<span class="t" style="left:526.62px;top:413.6px;font-size:14.6px;line-height:20px;transform:scaleX(0.9109);color:#1a1a1a;">2015</span>
<span class="t" style="left:37.60px;top:433.2px;font-size:14.6px;line-height:20px;transform:scaleX(0.8697);color:#1a1a1a;">Fake Brothers</span>
<span class="t" style="left:251.71px;top:433.2px;font-size:14.6px;line-height:20px;transform:scaleX(0.9092);color:#1a1a1a;">12/31/2015</span>
<span class="t" style="left:359.49px;top:433.2px;font-size:14.6px;line-height:20px;transform:scaleX(0.9247);color:#1a1a1a;">$90,967</span>
<span class="t" style="left:433.24px;top:433.2px;font-size:14.6px;line-height:20px;transform:scaleX(0.9544);color:#1a1a1a;">December</span>
<span class="t" style="left:526.62px;top:433.2px;font-size:14.6px;line-height:20px;transform:scaleX(0.9109);color:#1a1a1a;">2015</span>
<span class="t" style="left:37.60px;top:452.8px;font-size:14.6px;line-height:20px;transform:scaleX(0.8697);color:#1a1a1a;">Fake Brothers</span>
<span class="t" style="left:251.71px;top:452.8px;font-size:14.6px;line-height:20px;transform:scaleX(0.9092);color:#1a1a1a;">12/31/2015</span>
<span class="t" style="left:359.49px;top:452.8px;font-size:14.6px;line-height:20px;transform:scaleX(0.9247);color:#1a1a1a;">$90,967</span>
<span class="t" style="left:433.24px;top:452.8px;font-size:14.6px;line-height:20px;transform:scaleX(0.9544);color:#1a1a1a;">December</span>
<span class="t" style="left:526.62px;top:452.8px;font-size:14.6px;line-height:20px;transform:scaleX(0.9109);color:#1a1a1a;">2015</span>
<span class="t" style="left:255.40px;top:472.5px;font-size:14.6px;line-height:20px;transform:scaleX(0.9108);color:#1a1a1a;">9/30/2015</span>
<span class="t" style="left:356.40px;top:472.5px;font-size:14.6px;line-height:20px;transform:scaleX(0.9130);color:#1a1a1a;">$969,199</span>
<svg class="r" style="left:570.5px;top:485px" width="5" height="5" viewBox="0 0 5 5"><path d="M4 0.4 V4 H0.4" fill="none" stroke="#2f5fa8" stroke-width="1.9"/></svg>
<div class="r" style="left:60.1px;top:55.2px;width:234.9px;height:572.8px;background:#fff;border:1px solid #8c8c8c;border-radius:4.5px;box-sizing:border-box;box-shadow:2px 3px 7px rgba(0,0,0,0.2);overflow:hidden"></div>
<div class="r" style="left:277.6px;top:56.2px;width:16.4px;height:535.2px;background:#f1f1f1;border-radius:0 4.5px 0 0;"></div>
<div class="r" style="left:282.0px;top:72.3px;width:8.0px;height:399.2px;background:#757575;"></div>
<svg class="r" style="left:281px;top:60.2px" width="10" height="8" viewBox="0 0 10 8"><path d="M5 0.8 L9.3 7.1 H0.7 Z" fill="#747474"/></svg>
<svg class="r" style="left:281px;top:578.6px" width="10" height="8" viewBox="0 0 10 8"><path d="M0.7 1 H9.3 L5 7.2 Z" fill="#747474"/></svg>
<span class="t" style="left:75.20px;top:63.3px;font-size:12.2px;line-height:17px;transform:scaleX(0.8979);color:#1f1f1f;font-weight:bold;">Custom</span>
<div class="r" style="left:61.6px;top:153.0px;width:216.0px;height:1.0px;background:#e1e1e1;"></div>
<span class="t" style="left:75.20px;top:160.9px;font-size:12.2px;line-height:17px;transform:scaleX(0.8957);color:#1f1f1f;font-weight:bold;">Office</span>
<div class="r" style="left:61.6px;top:591.3px;width:232.4px;height:1.0px;background:#dcdcdc;"></div>
<div class="r" style="left:72.6px;top:90.1px;width:12.0px;height:11.2px;background:#5f5f5f;"></div>
<div class="r" style="left:84.6px;top:90.1px;width:12.0px;height:11.2px;background:#d2d2d2;"></div>
<div class="r" style="left:96.7px;top:90.1px;width:12.0px;height:11.2px;background:#38993b;"></div>
<div class="r" style="left:108.7px;top:90.1px;width:12.0px;height:11.2px;background:#56bd5b;"></div>
<div class="r" style="left:120.7px;top:90.1px;width:12.0px;height:11.2px;background:#f6e09c;"></div>
<div class="r" style="left:132.8px;top:90.1px;width:12.0px;height:11.2px;background:#001a4d;"></div>
<div class="r" style="left:144.8px;top:90.1px;width:12.0px;height:11.2px;background:#2391ad;"></div>
<div class="r" style="left:156.8px;top:90.1px;width:12.0px;height:11.2px;background:#c6d0fc;"></div>
<div class="r" style="left:72.6px;top:90.1px;width:1.0px;height:11.2px;background:rgba(110,110,110,0.55);"></div>
<div class="r" style="left:84.1px;top:90.1px;width:1.0px;height:11.2px;background:rgba(110,110,110,0.55);"></div>
<div class="r" style="left:96.2px;top:90.1px;width:1.0px;height:11.2px;background:rgba(110,110,110,0.55);"></div>
<div class="r" style="left:108.2px;top:90.1px;width:1.0px;height:11.2px;background:rgba(110,110,110,0.55);"></div>
<div class="r" style="left:120.2px;top:90.1px;width:1.0px;height:11.2px;background:rgba(110,110,110,0.55);"></div>
<div class="r" style="left:132.2px;top:90.1px;width:1.0px;height:11.2px;background:rgba(110,110,110,0.55);"></div>
<div class="r" style="left:144.3px;top:90.1px;width:1.0px;height:11.2px;background:rgba(110,110,110,0.55);"></div>
<div class="r" style="left:156.3px;top:90.1px;width:1.0px;height:11.2px;background:rgba(110,110,110,0.55);"></div>
<div class="r" style="left:167.8px;top:90.1px;width:1.0px;height:11.2px;background:rgba(110,110,110,0.55);"></div>
<div class="r" style="left:72.6px;top:89.8px;width:96.2px;height:0.8px;background:rgba(110,110,110,0.45);"></div>
<div class="r" style="left:72.6px;top:100.8px;width:96.2px;height:0.8px;background:rgba(110,110,110,0.45);"></div>
<span class="t" style="left:178.00px;top:88.7px;font-size:12.2px;line-height:17px;transform:scaleX(0.9049);color:#2b2b2b;">Custom 1</span>
<div class="r" style="left:72.6px;top:112.8px;width:12.0px;height:11.2px;background:#5f5f5f;"></div>
<div class="r" style="left:84.6px;top:112.8px;width:12.0px;height:11.2px;background:#d2d2d2;"></div>
<div class="r" style="left:96.7px;top:112.8px;width:12.0px;height:11.2px;background:#38993b;"></div>
<div class="r" style="left:108.7px;top:112.8px;width:12.0px;height:11.2px;background:#56bd5b;"></div>
<div class="r" style="left:120.7px;top:112.8px;width:12.0px;height:11.2px;background:#dff4df;"></div>
<div class="r" style="left:132.8px;top:112.8px;width:12.0px;height:11.2px;background:#001a4d;"></div>
<div class="r" style="left:144.8px;top:112.8px;width:12.0px;height:11.2px;background:#2391ad;"></div>
<div class="r" style="left:156.8px;top:112.8px;width:12.0px;height:11.2px;background:#c6d0fc;"></div>
<div class="r" style="left:72.6px;top:112.8px;width:1.0px;height:11.2px;background:rgba(110,110,110,0.55);"></div>
<div class="r" style="left:84.1px;top:112.8px;width:1.0px;height:11.2px;background:rgba(110,110,110,0.55);"></div>
<div class="r" style="left:96.2px;top:112.8px;width:1.0px;height:11.2px;background:rgba(110,110,110,0.55);"></div>
<div class="r" style="left:108.2px;top:112.8px;width:1.0px;height:11.2px;background:rgba(110,110,110,0.55);"></div>
<div class="r" style="left:120.2px;top:112.8px;width:1.0px;height:11.2px;background:rgba(110,110,110,0.55);"></div>
<div class="r" style="left:132.2px;top:112.8px;width:1.0px;height:11.2px;background:rgba(110,110,110,0.55);"></div>
<div class="r" style="left:144.3px;top:112.8px;width:1.0px;height:11.2px;background:rgba(110,110,110,0.55);"></div>
<div class="r" style="left:156.3px;top:112.8px;width:1.0px;height:11.2px;background:rgba(110,110,110,0.55);"></div>
<div class="r" style="left:167.8px;top:112.8px;width:1.0px;height:11.2px;background:rgba(110,110,110,0.55);"></div>
<div class="r" style="left:72.6px;top:112.4px;width:96.2px;height:0.8px;background:rgba(110,110,110,0.45);"></div>
<div class="r" style="left:72.6px;top:123.4px;width:96.2px;height:0.8px;background:rgba(110,110,110,0.45);"></div>
<span class="t" style="left:178.00px;top:111.3px;font-size:12.2px;line-height:17px;transform:scaleX(0.9049);color:#2b2b2b;">Custom 2</span>
<div class="r" style="left:72.6px;top:135.4px;width:12.0px;height:11.2px;background:#5f5f5f;"></div>
<div class="r" style="left:84.6px;top:135.4px;width:12.0px;height:11.2px;background:#d2d2d2;"></div>
<div class="r" style="left:96.7px;top:135.4px;width:12.0px;height:11.2px;background:#38993b;"></div>
<div class="r" style="left:108.7px;top:135.4px;width:12.0px;height:11.2px;background:#56bd5b;"></div>
<div class="r" style="left:120.7px;top:135.4px;width:12.0px;height:11.2px;background:#dff4df;"></div>
<div class="r" style="left:132.8px;top:135.4px;width:12.0px;height:11.2px;background:#001a4d;"></div>
<div class="r" style="left:144.8px;top:135.4px;width:12.0px;height:11.2px;background:#2391ad;"></div>
<div class="r" style="left:156.8px;top:135.4px;width:12.0px;height:11.2px;background:#c6d0fc;"></div>
<div class="r" style="left:72.6px;top:135.4px;width:1.0px;height:11.2px;background:rgba(110,110,110,0.55);"></div>
<div class="r" style="left:84.1px;top:135.4px;width:1.0px;height:11.2px;background:rgba(110,110,110,0.55);"></div>
<div class="r" style="left:96.2px;top:135.4px;width:1.0px;height:11.2px;background:rgba(110,110,110,0.55);"></div>
<div class="r" style="left:108.2px;top:135.4px;width:1.0px;height:11.2px;background:rgba(110,110,110,0.55);"></div>
<div class="r" style="left:120.2px;top:135.4px;width:1.0px;height:11.2px;background:rgba(110,110,110,0.55);"></div>
<div class="r" style="left:132.2px;top:135.4px;width:1.0px;height:11.2px;background:rgba(110,110,110,0.55);"></div>
<div class="r" style="left:144.3px;top:135.4px;width:1.0px;height:11.2px;background:rgba(110,110,110,0.55);"></div>
<div class="r" style="left:156.3px;top:135.4px;width:1.0px;height:11.2px;background:rgba(110,110,110,0.55);"></div>
<div class="r" style="left:167.8px;top:135.4px;width:1.0px;height:11.2px;background:rgba(110,110,110,0.55);"></div>
<div class="r" style="left:72.6px;top:135.1px;width:96.2px;height:0.8px;background:rgba(110,110,110,0.45);"></div>
<div class="r" style="left:72.6px;top:146.1px;width:96.2px;height:0.8px;background:rgba(110,110,110,0.45);"></div>
<span class="t" style="left:178.00px;top:134.0px;font-size:12.2px;line-height:17px;transform:scaleX(0.9049);color:#2b2b2b;">Custom 3</span>
<div class="r" style="left:61.6px;top:182.8px;width:216.0px;height:22.2px;background:#ebebeb;"></div>
<div class="r" style="left:72.6px;top:188.2px;width:12.0px;height:11.2px;background:#0E2841;"></div>
<div class="r" style="left:84.6px;top:188.2px;width:12.0px;height:11.2px;background:#E8E8E8;"></div>
<div class="r" style="left:96.7px;top:188.2px;width:12.0px;height:11.2px;background:#156082;"></div>
<div class="r" style="left:108.7px;top:188.2px;width:12.0px;height:11.2px;background:#E97132;"></div>
<div class="r" style="left:120.7px;top:188.2px;width:12.0px;height:11.2px;background:#196B24;"></div>
<div class="r" style="left:132.8px;top:188.2px;width:12.0px;height:11.2px;background:#0F9ED5;"></div>
<div class="r" style="left:144.8px;top:188.2px;width:12.0px;height:11.2px;background:#A02B93;"></div>
<div class="r" style="left:156.8px;top:188.2px;width:12.0px;height:11.2px;background:#4EA72E;"></div>
<div class="r" style="left:72.6px;top:188.2px;width:1.0px;height:11.2px;background:rgba(110,110,110,0.55);"></div>
<div class="r" style="left:84.1px;top:188.2px;width:1.0px;height:11.2px;background:rgba(110,110,110,0.55);"></div>
<div class="r" style="left:96.2px;top:188.2px;width:1.0px;height:11.2px;background:rgba(110,110,110,0.55);"></div>
<div class="r" style="left:108.2px;top:188.2px;width:1.0px;height:11.2px;background:rgba(110,110,110,0.55);"></div>
<div class="r" style="left:120.2px;top:188.2px;width:1.0px;height:11.2px;background:rgba(110,110,110,0.55);"></div>
<div class="r" style="left:132.2px;top:188.2px;width:1.0px;height:11.2px;background:rgba(110,110,110,0.55);"></div>
<div class="r" style="left:144.3px;top:188.2px;width:1.0px;height:11.2px;background:rgba(110,110,110,0.55);"></div>
<div class="r" style="left:156.3px;top:188.2px;width:1.0px;height:11.2px;background:rgba(110,110,110,0.55);"></div>
<div class="r" style="left:167.8px;top:188.2px;width:1.0px;height:11.2px;background:rgba(110,110,110,0.55);"></div>
<div class="r" style="left:72.6px;top:187.9px;width:96.2px;height:0.8px;background:rgba(110,110,110,0.45);"></div>
<div class="r" style="left:72.6px;top:198.9px;width:96.2px;height:0.8px;background:rgba(110,110,110,0.45);"></div>
<span class="t" style="left:178.00px;top:186.8px;font-size:12.2px;line-height:17px;transform:scaleX(0.9582);color:#2b2b2b;">Office</span>
<div class="r" style="left:72.6px;top:210.9px;width:12.0px;height:11.2px;background:#44546A;"></div>
<div class="r" style="left:84.6px;top:210.9px;width:12.0px;height:11.2px;background:#E7E6E6;"></div>
<div class="r" style="left:96.7px;top:210.9px;width:12.0px;height:11.2px;background:#4472C4;"></div>
<div class="r" style="left:108.7px;top:210.9px;width:12.0px;height:11.2px;background:#ED7D31;"></div>
<div class="r" style="left:120.7px;top:210.9px;width:12.0px;height:11.2px;background:#A5A5A5;"></div>
<div class="r" style="left:132.8px;top:210.9px;width:12.0px;height:11.2px;background:#FFC000;"></div>
<div class="r" style="left:144.8px;top:210.9px;width:12.0px;height:11.2px;background:#5B9BD5;"></div>
<div class="r" style="left:156.8px;top:210.9px;width:12.0px;height:11.2px;background:#70AD47;"></div>
<div class="r" style="left:72.6px;top:210.9px;width:1.0px;height:11.2px;background:rgba(110,110,110,0.55);"></div>
<div class="r" style="left:84.1px;top:210.9px;width:1.0px;height:11.2px;background:rgba(110,110,110,0.55);"></div>
<div class="r" style="left:96.2px;top:210.9px;width:1.0px;height:11.2px;background:rgba(110,110,110,0.55);"></div>
<div class="r" style="left:108.2px;top:210.9px;width:1.0px;height:11.2px;background:rgba(110,110,110,0.55);"></div>
<div class="r" style="left:120.2px;top:210.9px;width:1.0px;height:11.2px;background:rgba(110,110,110,0.55);"></div>
<div class="r" style="left:132.2px;top:210.9px;width:1.0px;height:11.2px;background:rgba(110,110,110,0.55);"></div>
<div class="r" style="left:144.3px;top:210.9px;width:1.0px;height:11.2px;background:rgba(110,110,110,0.55);"></div>
<div class="r" style="left:156.3px;top:210.9px;width:1.0px;height:11.2px;background:rgba(110,110,110,0.55);"></div>
<div class="r" style="left:167.8px;top:210.9px;width:1.0px;height:11.2px;background:rgba(110,110,110,0.55);"></div>
<div class="r" style="left:72.6px;top:210.6px;width:96.2px;height:0.8px;background:rgba(110,110,110,0.45);"></div>
<div class="r" style="left:72.6px;top:221.6px;width:96.2px;height:0.8px;background:rgba(110,110,110,0.45);"></div>
<span class="t" style="left:178.00px;top:209.5px;font-size:12.2px;line-height:17px;transform:scaleX(0.9220);color:#2b2b2b;">Office 2013 - 2022</span>
<div class="r" style="left:72.6px;top:233.5px;width:12.0px;height:11.2px;background:#1F497D;"></div>
<div class="r" style="left:84.6px;top:233.5px;width:12.0px;height:11.2px;background:#EEECE1;"></div>
<div class="r" style="left:96.7px;top:233.5px;width:12.0px;height:11.2px;background:#4F81BD;"></div>
<div class="r" style="left:108.7px;top:233.5px;width:12.0px;height:11.2px;background:#C0504D;"></div>
<div class="r" style="left:120.7px;top:233.5px;width:12.0px;height:11.2px;background:#9BBB59;"></div>
<div class="r" style="left:132.8px;top:233.5px;width:12.0px;height:11.2px;background:#8064A2;"></div>
<div class="r" style="left:144.8px;top:233.5px;width:12.0px;height:11.2px;background:#4BACC6;"></div>
<div class="r" style="left:156.8px;top:233.5px;width:12.0px;height:11.2px;background:#F79646;"></div>
<div class="r" style="left:72.6px;top:233.5px;width:1.0px;height:11.2px;background:rgba(110,110,110,0.55);"></div>
<div class="r" style="left:84.1px;top:233.5px;width:1.0px;height:11.2px;background:rgba(110,110,110,0.55);"></div>
<div class="r" style="left:96.2px;top:233.5px;width:1.0px;height:11.2px;background:rgba(110,110,110,0.55);"></div>
<div class="r" style="left:108.2px;top:233.5px;width:1.0px;height:11.2px;background:rgba(110,110,110,0.55);"></div>
<div class="r" style="left:120.2px;top:233.5px;width:1.0px;height:11.2px;background:rgba(110,110,110,0.55);"></div>
<div class="r" style="left:132.2px;top:233.5px;width:1.0px;height:11.2px;background:rgba(110,110,110,0.55);"></div>
<div class="r" style="left:144.3px;top:233.5px;width:1.0px;height:11.2px;background:rgba(110,110,110,0.55);"></div>
<div class="r" style="left:156.3px;top:233.5px;width:1.0px;height:11.2px;background:rgba(110,110,110,0.55);"></div>
<div class="r" style="left:167.8px;top:233.5px;width:1.0px;height:11.2px;background:rgba(110,110,110,0.55);"></div>
<div class="r" style="left:72.6px;top:233.2px;width:96.2px;height:0.8px;background:rgba(110,110,110,0.45);"></div>
<div class="r" style="left:72.6px;top:244.2px;width:96.2px;height:0.8px;background:rgba(110,110,110,0.45);"></div>
<span class="t" style="left:178.00px;top:232.1px;font-size:12.2px;line-height:17px;transform:scaleX(0.9220);color:#2b2b2b;">Office 2007 - 2010</span>
<div class="r" style="left:72.6px;top:256.1px;width:12.0px;height:11.2px;background:#000000;"></div>
<div class="r" style="left:84.6px;top:256.1px;width:12.0px;height:11.2px;background:#F8F8F8;"></div>
<div class="r" style="left:96.7px;top:256.1px;width:12.0px;height:11.2px;background:#DDDDDD;"></div>
<div class="r" style="left:108.7px;top:256.1px;width:12.0px;height:11.2px;background:#B2B2B2;"></div>
<div class="r" style="left:120.7px;top:256.1px;width:12.0px;height:11.2px;background:#969696;"></div>
<div class="r" style="left:132.8px;top:256.1px;width:12.0px;height:11.2px;background:#808080;"></div>
<div class="r" style="left:144.8px;top:256.1px;width:12.0px;height:11.2px;background:#5F5F5F;"></div>
<div class="r" style="left:156.8px;top:256.1px;width:12.0px;height:11.2px;background:#4D4D4D;"></div>
<div class="r" style="left:72.6px;top:256.1px;width:1.0px;height:11.2px;background:rgba(110,110,110,0.55);"></div>
<div class="r" style="left:84.1px;top:256.1px;width:1.0px;height:11.2px;background:rgba(110,110,110,0.55);"></div>
<div class="r" style="left:96.2px;top:256.1px;width:1.0px;height:11.2px;background:rgba(110,110,110,0.55);"></div>
<div class="r" style="left:108.2px;top:256.1px;width:1.0px;height:11.2px;background:rgba(110,110,110,0.55);"></div>
<div class="r" style="left:120.2px;top:256.1px;width:1.0px;height:11.2px;background:rgba(110,110,110,0.55);"></div>
<div class="r" style="left:132.2px;top:256.1px;width:1.0px;height:11.2px;background:rgba(110,110,110,0.55);"></div>
<div class="r" style="left:144.3px;top:256.1px;width:1.0px;height:11.2px;background:rgba(110,110,110,0.55);"></div>
<div class="r" style="left:156.3px;top:256.1px;width:1.0px;height:11.2px;background:rgba(110,110,110,0.55);"></div>
<div class="r" style="left:167.8px;top:256.1px;width:1.0px;height:11.2px;background:rgba(110,110,110,0.55);"></div>
<div class="r" style="left:72.6px;top:255.8px;width:96.2px;height:0.8px;background:rgba(110,110,110,0.45);"></div>
<div class="r" style="left:72.6px;top:266.9px;width:96.2px;height:0.8px;background:rgba(110,110,110,0.45);"></div>
<span class="t" style="left:178.00px;top:254.8px;font-size:12.2px;line-height:17px;transform:scaleX(0.8652);color:#2b2b2b;">Grayscale</span>
<div class="r" style="left:72.6px;top:278.8px;width:12.0px;height:11.2px;background:#242852;"></div>
<div class="r" style="left:84.6px;top:278.8px;width:12.0px;height:11.2px;background:#ACCBF9;"></div>
<div class="r" style="left:96.7px;top:278.8px;width:12.0px;height:11.2px;background:#4A66AC;"></div>
<div class="r" style="left:108.7px;top:278.8px;width:12.0px;height:11.2px;background:#629DD1;"></div>
<div class="r" style="left:120.7px;top:278.8px;width:12.0px;height:11.2px;background:#297FD5;"></div>
<div class="r" style="left:132.8px;top:278.8px;width:12.0px;height:11.2px;background:#7F8FA9;"></div>
<div class="r" style="left:144.8px;top:278.8px;width:12.0px;height:11.2px;background:#5AA2AE;"></div>
<div class="r" style="left:156.8px;top:278.8px;width:12.0px;height:11.2px;background:#9D90A0;"></div>
<div class="r" style="left:72.6px;top:278.8px;width:1.0px;height:11.2px;background:rgba(110,110,110,0.55);"></div>
<div class="r" style="left:84.1px;top:278.8px;width:1.0px;height:11.2px;background:rgba(110,110,110,0.55);"></div>
<div class="r" style="left:96.2px;top:278.8px;width:1.0px;height:11.2px;background:rgba(110,110,110,0.55);"></div>
<div class="r" style="left:108.2px;top:278.8px;width:1.0px;height:11.2px;background:rgba(110,110,110,0.55);"></div>
<div class="r" style="left:120.2px;top:278.8px;width:1.0px;height:11.2px;background:rgba(110,110,110,0.55);"></div>
<div class="r" style="left:132.2px;top:278.8px;width:1.0px;height:11.2px;background:rgba(110,110,110,0.55);"></div>
<div class="r" style="left:144.3px;top:278.8px;width:1.0px;height:11.2px;background:rgba(110,110,110,0.55);"></div>
<div class="r" style="left:156.3px;top:278.8px;width:1.0px;height:11.2px;background:rgba(110,110,110,0.55);"></div>
<div class="r" style="left:167.8px;top:278.8px;width:1.0px;height:11.2px;background:rgba(110,110,110,0.55);"></div>
<div class="r" style="left:72.6px;top:278.5px;width:96.2px;height:0.8px;background:rgba(110,110,110,0.45);"></div>
<div class="r" style="left:72.6px;top:289.5px;width:96.2px;height:0.8px;background:rgba(110,110,110,0.45);"></div>
<span class="t" style="left:178.00px;top:277.4px;font-size:12.2px;line-height:17px;transform:scaleX(0.9185);color:#2b2b2b;">Blue Warm</span>
<div class="r" style="left:72.6px;top:301.4px;width:12.0px;height:11.2px;background:#17406D;"></div>
<div class="r" style="left:84.6px;top:301.4px;width:12.0px;height:11.2px;background:#DBEFF9;"></div>
<div class="r" style="left:96.7px;top:301.4px;width:12.0px;height:11.2px;background:#0F6FC6;"></div>
<div class="r" style="left:108.7px;top:301.4px;width:12.0px;height:11.2px;background:#009DD9;"></div>
<div class="r" style="left:120.7px;top:301.4px;width:12.0px;height:11.2px;background:#0BD0D9;"></div>
<div class="r" style="left:132.8px;top:301.4px;width:12.0px;height:11.2px;background:#10CF9B;"></div>
<div class="r" style="left:144.8px;top:301.4px;width:12.0px;height:11.2px;background:#7CCA62;"></div>
<div class="r" style="left:156.8px;top:301.4px;width:12.0px;height:11.2px;background:#A5C249;"></div>
<div class="r" style="left:72.6px;top:301.4px;width:1.0px;height:11.2px;background:rgba(110,110,110,0.55);"></div>
<div class="r" style="left:84.1px;top:301.4px;width:1.0px;height:11.2px;background:rgba(110,110,110,0.55);"></div>
<div class="r" style="left:96.2px;top:301.4px;width:1.0px;height:11.2px;background:rgba(110,110,110,0.55);"></div>
<div class="r" style="left:108.2px;top:301.4px;width:1.0px;height:11.2px;background:rgba(110,110,110,0.55);"></div>
<div class="r" style="left:120.2px;top:301.4px;width:1.0px;height:11.2px;background:rgba(110,110,110,0.55);"></div>
<div class="r" style="left:132.2px;top:301.4px;width:1.0px;height:11.2px;background:rgba(110,110,110,0.55);"></div>
<div class="r" style="left:144.3px;top:301.4px;width:1.0px;height:11.2px;background:rgba(110,110,110,0.55);"></div>
<div class="r" style="left:156.3px;top:301.4px;width:1.0px;height:11.2px;background:rgba(110,110,110,0.55);"></div>
<div class="r" style="left:167.8px;top:301.4px;width:1.0px;height:11.2px;background:rgba(110,110,110,0.55);"></div>
<div class="r" style="left:72.6px;top:301.2px;width:96.2px;height:0.8px;background:rgba(110,110,110,0.45);"></div>
<div class="r" style="left:72.6px;top:312.2px;width:96.2px;height:0.8px;background:rgba(110,110,110,0.45);"></div>
<span class="t" style="left:178.00px;top:300.1px;font-size:12.2px;line-height:17px;transform:scaleX(0.9098);color:#2b2b2b;">Blue</span>
<div class="r" style="left:72.6px;top:324.1px;width:12.0px;height:11.2px;background:#335B74;"></div>
<div class="r" style="left:84.6px;top:324.1px;width:12.0px;height:11.2px;background:#DFE3E5;"></div>
<div class="r" style="left:96.7px;top:324.1px;width:12.0px;height:11.2px;background:#1CADE4;"></div>
<div class="r" style="left:108.7px;top:324.1px;width:12.0px;height:11.2px;background:#2683C6;"></div>
<div class="r" style="left:120.7px;top:324.1px;width:12.0px;height:11.2px;background:#27CED7;"></div>
<div class="r" style="left:132.8px;top:324.1px;width:12.0px;height:11.2px;background:#42BA97;"></div>
<div class="r" style="left:144.8px;top:324.1px;width:12.0px;height:11.2px;background:#3E8853;"></div>
<div class="r" style="left:156.8px;top:324.1px;width:12.0px;height:11.2px;background:#62A39F;"></div>
<div class="r" style="left:72.6px;top:324.1px;width:1.0px;height:11.2px;background:rgba(110,110,110,0.55);"></div>
<div class="r" style="left:84.1px;top:324.1px;width:1.0px;height:11.2px;background:rgba(110,110,110,0.55);"></div>
<div class="r" style="left:96.2px;top:324.1px;width:1.0px;height:11.2px;background:rgba(110,110,110,0.55);"></div>
<div class="r" style="left:108.2px;top:324.1px;width:1.0px;height:11.2px;background:rgba(110,110,110,0.55);"></div>
<div class="r" style="left:120.2px;top:324.1px;width:1.0px;height:11.2px;background:rgba(110,110,110,0.55);"></div>
<div class="r" style="left:132.2px;top:324.1px;width:1.0px;height:11.2px;background:rgba(110,110,110,0.55);"></div>
<div class="r" style="left:144.3px;top:324.1px;width:1.0px;height:11.2px;background:rgba(110,110,110,0.55);"></div>
<div class="r" style="left:156.3px;top:324.1px;width:1.0px;height:11.2px;background:rgba(110,110,110,0.55);"></div>
<div class="r" style="left:167.8px;top:324.1px;width:1.0px;height:11.2px;background:rgba(110,110,110,0.55);"></div>
<div class="r" style="left:72.6px;top:323.8px;width:96.2px;height:0.8px;background:rgba(110,110,110,0.45);"></div>
<div class="r" style="left:72.6px;top:334.8px;width:96.2px;height:0.8px;background:rgba(110,110,110,0.45);"></div>
<span class="t" style="left:178.00px;top:322.7px;font-size:12.2px;line-height:17px;transform:scaleX(0.8900);color:#2b2b2b;">Blue II</span>
<div class="r" style="left:72.6px;top:346.8px;width:12.0px;height:11.2px;background:#373545;"></div>
<div class="r" style="left:84.6px;top:346.8px;width:12.0px;height:11.2px;background:#CEDBE6;"></div>
<div class="r" style="left:96.7px;top:346.8px;width:12.0px;height:11.2px;background:#3494BA;"></div>
<div class="r" style="left:108.7px;top:346.8px;width:12.0px;height:11.2px;background:#58B6C0;"></div>
<div class="r" style="left:120.7px;top:346.8px;width:12.0px;height:11.2px;background:#75BDA7;"></div>
<div class="r" style="left:132.8px;top:346.8px;width:12.0px;height:11.2px;background:#7A8C8E;"></div>
<div class="r" style="left:144.8px;top:346.8px;width:12.0px;height:11.2px;background:#84ACB6;"></div>
<div class="r" style="left:156.8px;top:346.8px;width:12.0px;height:11.2px;background:#2683C6;"></div>
<div class="r" style="left:72.6px;top:346.8px;width:1.0px;height:11.2px;background:rgba(110,110,110,0.55);"></div>
<div class="r" style="left:84.1px;top:346.8px;width:1.0px;height:11.2px;background:rgba(110,110,110,0.55);"></div>
<div class="r" style="left:96.2px;top:346.8px;width:1.0px;height:11.2px;background:rgba(110,110,110,0.55);"></div>
<div class="r" style="left:108.2px;top:346.8px;width:1.0px;height:11.2px;background:rgba(110,110,110,0.55);"></div>
<div class="r" style="left:120.2px;top:346.8px;width:1.0px;height:11.2px;background:rgba(110,110,110,0.55);"></div>
<div class="r" style="left:132.2px;top:346.8px;width:1.0px;height:11.2px;background:rgba(110,110,110,0.55);"></div>
<div class="r" style="left:144.3px;top:346.8px;width:1.0px;height:11.2px;background:rgba(110,110,110,0.55);"></div>
<div class="r" style="left:156.3px;top:346.8px;width:1.0px;height:11.2px;background:rgba(110,110,110,0.55);"></div>
<div class="r" style="left:167.8px;top:346.8px;width:1.0px;height:11.2px;background:rgba(110,110,110,0.55);"></div>
<div class="r" style="left:72.6px;top:346.5px;width:96.2px;height:0.8px;background:rgba(110,110,110,0.45);"></div>
<div class="r" style="left:72.6px;top:357.5px;width:96.2px;height:0.8px;background:rgba(110,110,110,0.45);"></div>
<span class="t" style="left:178.00px;top:345.4px;font-size:12.2px;line-height:17px;transform:scaleX(0.8826);color:#2b2b2b;">Blue Green</span>
<div class="r" style="left:72.6px;top:369.4px;width:12.0px;height:11.2px;background:#455F51;"></div>
<div class="r" style="left:84.6px;top:369.4px;width:12.0px;height:11.2px;background:#E3DED1;"></div>
<div class="r" style="left:96.7px;top:369.4px;width:12.0px;height:11.2px;background:#549E39;"></div>
<div class="r" style="left:108.7px;top:369.4px;width:12.0px;height:11.2px;background:#8AB833;"></div>
<div class="r" style="left:120.7px;top:369.4px;width:12.0px;height:11.2px;background:#C0CF3A;"></div>
<div class="r" style="left:132.8px;top:369.4px;width:12.0px;height:11.2px;background:#029676;"></div>
<div class="r" style="left:144.8px;top:369.4px;width:12.0px;height:11.2px;background:#4AB5C4;"></div>
<div class="r" style="left:156.8px;top:369.4px;width:12.0px;height:11.2px;background:#0989B1;"></div>
<div class="r" style="left:72.6px;top:369.4px;width:1.0px;height:11.2px;background:rgba(110,110,110,0.55);"></div>
<div class="r" style="left:84.1px;top:369.4px;width:1.0px;height:11.2px;background:rgba(110,110,110,0.55);"></div>
<div class="r" style="left:96.2px;top:369.4px;width:1.0px;height:11.2px;background:rgba(110,110,110,0.55);"></div>
<div class="r" style="left:108.2px;top:369.4px;width:1.0px;height:11.2px;background:rgba(110,110,110,0.55);"></div>
<div class="r" style="left:120.2px;top:369.4px;width:1.0px;height:11.2px;background:rgba(110,110,110,0.55);"></div>
<div class="r" style="left:132.2px;top:369.4px;width:1.0px;height:11.2px;background:rgba(110,110,110,0.55);"></div>
<div class="r" style="left:144.3px;top:369.4px;width:1.0px;height:11.2px;background:rgba(110,110,110,0.55);"></div>
<div class="r" style="left:156.3px;top:369.4px;width:1.0px;height:11.2px;background:rgba(110,110,110,0.55);"></div>
<div class="r" style="left:167.8px;top:369.4px;width:1.0px;height:11.2px;background:rgba(110,110,110,0.55);"></div>
<div class="r" style="left:72.6px;top:369.1px;width:96.2px;height:0.8px;background:rgba(110,110,110,0.45);"></div>
<div class="r" style="left:72.6px;top:380.1px;width:96.2px;height:0.8px;background:rgba(110,110,110,0.45);"></div>
<span class="t" style="left:178.00px;top:368.0px;font-size:12.2px;line-height:17px;transform:scaleX(0.8712);color:#2b2b2b;">Green</span>
<div class="r" style="left:72.6px;top:392.0px;width:12.0px;height:11.2px;background:#455F51;"></div>
<div class="r" style="left:84.6px;top:392.0px;width:12.0px;height:11.2px;background:#E2DFCC;"></div>
<div class="r" style="left:96.7px;top:392.0px;width:12.0px;height:11.2px;background:#99CB38;"></div>
<div class="r" style="left:108.7px;top:392.0px;width:12.0px;height:11.2px;background:#63A537;"></div>
<div class="r" style="left:120.7px;top:392.0px;width:12.0px;height:11.2px;background:#37A76F;"></div>
<div class="r" style="left:132.8px;top:392.0px;width:12.0px;height:11.2px;background:#44C1A3;"></div>
<div class="r" style="left:144.8px;top:392.0px;width:12.0px;height:11.2px;background:#4EB3CF;"></div>
<div class="r" style="left:156.8px;top:392.0px;width:12.0px;height:11.2px;background:#51C3F9;"></div>
<div class="r" style="left:72.6px;top:392.0px;width:1.0px;height:11.2px;background:rgba(110,110,110,0.55);"></div>
<div class="r" style="left:84.1px;top:392.0px;width:1.0px;height:11.2px;background:rgba(110,110,110,0.55);"></div>
<div class="r" style="left:96.2px;top:392.0px;width:1.0px;height:11.2px;background:rgba(110,110,110,0.55);"></div>
<div class="r" style="left:108.2px;top:392.0px;width:1.0px;height:11.2px;background:rgba(110,110,110,0.55);"></div>
<div class="r" style="left:120.2px;top:392.0px;width:1.0px;height:11.2px;background:rgba(110,110,110,0.55);"></div>
<div class="r" style="left:132.2px;top:392.0px;width:1.0px;height:11.2px;background:rgba(110,110,110,0.55);"></div>
<div class="r" style="left:144.3px;top:392.0px;width:1.0px;height:11.2px;background:rgba(110,110,110,0.55);"></div>
<div class="r" style="left:156.3px;top:392.0px;width:1.0px;height:11.2px;background:rgba(110,110,110,0.55);"></div>
<div class="r" style="left:167.8px;top:392.0px;width:1.0px;height:11.2px;background:rgba(110,110,110,0.55);"></div>
<div class="r" style="left:72.6px;top:391.8px;width:96.2px;height:0.8px;background:rgba(110,110,110,0.45);"></div>
<div class="r" style="left:72.6px;top:402.8px;width:96.2px;height:0.8px;background:rgba(110,110,110,0.45);"></div>
<span class="t" style="left:178.00px;top:390.6px;font-size:12.2px;line-height:17px;transform:scaleX(0.9087);color:#2b2b2b;">Green Yellow</span>
<div class="r" style="left:72.6px;top:414.7px;width:12.0px;height:11.2px;background:#39302A;"></div>
<div class="r" style="left:84.6px;top:414.7px;width:12.0px;height:11.2px;background:#E5DEDB;"></div>
<div class="r" style="left:96.7px;top:414.7px;width:12.0px;height:11.2px;background:#FFCA08;"></div>
<div class="r" style="left:108.7px;top:414.7px;width:12.0px;height:11.2px;background:#F8931D;"></div>
<div class="r" style="left:120.7px;top:414.7px;width:12.0px;height:11.2px;background:#CE8D3E;"></div>
<div class="r" style="left:132.8px;top:414.7px;width:12.0px;height:11.2px;background:#EC7016;"></div>
<div class="r" style="left:144.8px;top:414.7px;width:12.0px;height:11.2px;background:#E64823;"></div>
<div class="r" style="left:156.8px;top:414.7px;width:12.0px;height:11.2px;background:#9C6A6A;"></div>
<div class="r" style="left:72.6px;top:414.7px;width:1.0px;height:11.2px;background:rgba(110,110,110,0.55);"></div>
<div class="r" style="left:84.1px;top:414.7px;width:1.0px;height:11.2px;background:rgba(110,110,110,0.55);"></div>
<div class="r" style="left:96.2px;top:414.7px;width:1.0px;height:11.2px;background:rgba(110,110,110,0.55);"></div>
<div class="r" style="left:108.2px;top:414.7px;width:1.0px;height:11.2px;background:rgba(110,110,110,0.55);"></div>
<div class="r" style="left:120.2px;top:414.7px;width:1.0px;height:11.2px;background:rgba(110,110,110,0.55);"></div>
<div class="r" style="left:132.2px;top:414.7px;width:1.0px;height:11.2px;background:rgba(110,110,110,0.55);"></div>
<div class="r" style="left:144.3px;top:414.7px;width:1.0px;height:11.2px;background:rgba(110,110,110,0.55);"></div>
<div class="r" style="left:156.3px;top:414.7px;width:1.0px;height:11.2px;background:rgba(110,110,110,0.55);"></div>
<div class="r" style="left:167.8px;top:414.7px;width:1.0px;height:11.2px;background:rgba(110,110,110,0.55);"></div>
<div class="r" style="left:72.6px;top:414.4px;width:96.2px;height:0.8px;background:rgba(110,110,110,0.45);"></div>
<div class="r" style="left:72.6px;top:425.4px;width:96.2px;height:0.8px;background:rgba(110,110,110,0.45);"></div>
<span class="t" style="left:178.00px;top:413.3px;font-size:12.2px;line-height:17px;transform:scaleX(0.9548);color:#2b2b2b;">Yellow</span>
<div class="r" style="left:72.6px;top:437.3px;width:12.0px;height:11.2px;background:#4E3B30;"></div>
<div class="r" style="left:84.6px;top:437.3px;width:12.0px;height:11.2px;background:#FBEEC9;"></div>
<div class="r" style="left:96.7px;top:437.3px;width:12.0px;height:11.2px;background:#F0A22E;"></div>
<div class="r" style="left:108.7px;top:437.3px;width:12.0px;height:11.2px;background:#A5644E;"></div>
<div class="r" style="left:120.7px;top:437.3px;width:12.0px;height:11.2px;background:#B58B80;"></div>
<div class="r" style="left:132.8px;top:437.3px;width:12.0px;height:11.2px;background:#C3986D;"></div>
<div class="r" style="left:144.8px;top:437.3px;width:12.0px;height:11.2px;background:#A19574;"></div>
<div class="r" style="left:156.8px;top:437.3px;width:12.0px;height:11.2px;background:#C17529;"></div>
<div class="r" style="left:72.6px;top:437.3px;width:1.0px;height:11.2px;background:rgba(110,110,110,0.55);"></div>
<div class="r" style="left:84.1px;top:437.3px;width:1.0px;height:11.2px;background:rgba(110,110,110,0.55);"></div>
<div class="r" style="left:96.2px;top:437.3px;width:1.0px;height:11.2px;background:rgba(110,110,110,0.55);"></div>
<div class="r" style="left:108.2px;top:437.3px;width:1.0px;height:11.2px;background:rgba(110,110,110,0.55);"></div>
<div class="r" style="left:120.2px;top:437.3px;width:1.0px;height:11.2px;background:rgba(110,110,110,0.55);"></div>
<div class="r" style="left:132.2px;top:437.3px;width:1.0px;height:11.2px;background:rgba(110,110,110,0.55);"></div>
<div class="r" style="left:144.3px;top:437.3px;width:1.0px;height:11.2px;background:rgba(110,110,110,0.55);"></div>
<div class="r" style="left:156.3px;top:437.3px;width:1.0px;height:11.2px;background:rgba(110,110,110,0.55);"></div>
<div class="r" style="left:167.8px;top:437.3px;width:1.0px;height:11.2px;background:rgba(110,110,110,0.55);"></div>
<div class="r" style="left:72.6px;top:437.1px;width:96.2px;height:0.8px;background:rgba(110,110,110,0.45);"></div>
<div class="r" style="left:72.6px;top:448.1px;width:96.2px;height:0.8px;background:rgba(110,110,110,0.45);"></div>
<span class="t" style="left:178.00px;top:435.9px;font-size:12.2px;line-height:17px;transform:scaleX(0.9249);color:#2b2b2b;">Yellow Orange</span>
<div class="r" style="left:72.6px;top:460.0px;width:12.0px;height:11.2px;background:#637052;"></div>
<div class="r" style="left:84.6px;top:460.0px;width:12.0px;height:11.2px;background:#CCDDEA;"></div>
<div class="r" style="left:96.7px;top:460.0px;width:12.0px;height:11.2px;background:#E48312;"></div>
<div class="r" style="left:108.7px;top:460.0px;width:12.0px;height:11.2px;background:#BD582C;"></div>
<div class="r" style="left:120.7px;top:460.0px;width:12.0px;height:11.2px;background:#865640;"></div>
<div class="r" style="left:132.8px;top:460.0px;width:12.0px;height:11.2px;background:#9B8357;"></div>
<div class="r" style="left:144.8px;top:460.0px;width:12.0px;height:11.2px;background:#C2BC80;"></div>
<div class="r" style="left:156.8px;top:460.0px;width:12.0px;height:11.2px;background:#94A088;"></div>
<div class="r" style="left:72.6px;top:460.0px;width:1.0px;height:11.2px;background:rgba(110,110,110,0.55);"></div>
<div class="r" style="left:84.1px;top:460.0px;width:1.0px;height:11.2px;background:rgba(110,110,110,0.55);"></div>
<div class="r" style="left:96.2px;top:460.0px;width:1.0px;height:11.2px;background:rgba(110,110,110,0.55);"></div>
<div class="r" style="left:108.2px;top:460.0px;width:1.0px;height:11.2px;background:rgba(110,110,110,0.55);"></div>
<div class="r" style="left:120.2px;top:460.0px;width:1.0px;height:11.2px;background:rgba(110,110,110,0.55);"></div>
<div class="r" style="left:132.2px;top:460.0px;width:1.0px;height:11.2px;background:rgba(110,110,110,0.55);"></div>
<div class="r" style="left:144.3px;top:460.0px;width:1.0px;height:11.2px;background:rgba(110,110,110,0.55);"></div>
<div class="r" style="left:156.3px;top:460.0px;width:1.0px;height:11.2px;background:rgba(110,110,110,0.55);"></div>
<div class="r" style="left:167.8px;top:460.0px;width:1.0px;height:11.2px;background:rgba(110,110,110,0.55);"></div>
<div class="r" style="left:72.6px;top:459.7px;width:96.2px;height:0.8px;background:rgba(110,110,110,0.45);"></div>
<div class="r" style="left:72.6px;top:470.7px;width:96.2px;height:0.8px;background:rgba(110,110,110,0.45);"></div>
<span class="t" style="left:178.00px;top:458.6px;font-size:12.2px;line-height:17px;transform:scaleX(0.9089);color:#2b2b2b;">Orange</span>
<div class="r" style="left:72.6px;top:482.6px;width:12.0px;height:11.2px;background:#696464;"></div>
<div class="r" style="left:84.6px;top:482.6px;width:12.0px;height:11.2px;background:#E9E5DC;"></div>
<div class="r" style="left:96.7px;top:482.6px;width:12.0px;height:11.2px;background:#D34817;"></div>
<div class="r" style="left:108.7px;top:482.6px;width:12.0px;height:11.2px;background:#9B2D1F;"></div>
<div class="r" style="left:120.7px;top:482.6px;width:12.0px;height:11.2px;background:#A28E6A;"></div>
<div class="r" style="left:132.8px;top:482.6px;width:12.0px;height:11.2px;background:#956251;"></div>
<div class="r" style="left:144.8px;top:482.6px;width:12.0px;height:11.2px;background:#918485;"></div>
<div class="r" style="left:156.8px;top:482.6px;width:12.0px;height:11.2px;background:#855D5D;"></div>
<div class="r" style="left:72.6px;top:482.6px;width:1.0px;height:11.2px;background:rgba(110,110,110,0.55);"></div>
<div class="r" style="left:84.1px;top:482.6px;width:1.0px;height:11.2px;background:rgba(110,110,110,0.55);"></div>
<div class="r" style="left:96.2px;top:482.6px;width:1.0px;height:11.2px;background:rgba(110,110,110,0.55);"></div>
<div class="r" style="left:108.2px;top:482.6px;width:1.0px;height:11.2px;background:rgba(110,110,110,0.55);"></div>
<div class="r" style="left:120.2px;top:482.6px;width:1.0px;height:11.2px;background:rgba(110,110,110,0.55);"></div>
<div class="r" style="left:132.2px;top:482.6px;width:1.0px;height:11.2px;background:rgba(110,110,110,0.55);"></div>
<div class="r" style="left:144.3px;top:482.6px;width:1.0px;height:11.2px;background:rgba(110,110,110,0.55);"></div>
<div class="r" style="left:156.3px;top:482.6px;width:1.0px;height:11.2px;background:rgba(110,110,110,0.55);"></div>
<div class="r" style="left:167.8px;top:482.6px;width:1.0px;height:11.2px;background:rgba(110,110,110,0.55);"></div>
<div class="r" style="left:72.6px;top:482.4px;width:96.2px;height:0.8px;background:rgba(110,110,110,0.45);"></div>
<div class="r" style="left:72.6px;top:493.4px;width:96.2px;height:0.8px;background:rgba(110,110,110,0.45);"></div>
<span class="t" style="left:178.00px;top:481.2px;font-size:12.2px;line-height:17px;transform:scaleX(0.8950);color:#2b2b2b;">Orange Red</span>
<div class="r" style="left:72.6px;top:505.3px;width:12.0px;height:11.2px;background:#505046;"></div>
<div class="r" style="left:84.6px;top:505.3px;width:12.0px;height:11.2px;background:#EEECE1;"></div>
<div class="r" style="left:96.7px;top:505.3px;width:12.0px;height:11.2px;background:#E84C22;"></div>
<div class="r" style="left:108.7px;top:505.3px;width:12.0px;height:11.2px;background:#FFBD47;"></div>
<div class="r" style="left:120.7px;top:505.3px;width:12.0px;height:11.2px;background:#B64926;"></div>
<div class="r" style="left:132.8px;top:505.3px;width:12.0px;height:11.2px;background:#FF8427;"></div>
<div class="r" style="left:144.8px;top:505.3px;width:12.0px;height:11.2px;background:#CC9900;"></div>
<div class="r" style="left:156.8px;top:505.3px;width:12.0px;height:11.2px;background:#B22600;"></div>
<div class="r" style="left:72.6px;top:505.3px;width:1.0px;height:11.2px;background:rgba(110,110,110,0.55);"></div>
<div class="r" style="left:84.1px;top:505.3px;width:1.0px;height:11.2px;background:rgba(110,110,110,0.55);"></div>
<div class="r" style="left:96.2px;top:505.3px;width:1.0px;height:11.2px;background:rgba(110,110,110,0.55);"></div>
<div class="r" style="left:108.2px;top:505.3px;width:1.0px;height:11.2px;background:rgba(110,110,110,0.55);"></div>
<div class="r" style="left:120.2px;top:505.3px;width:1.0px;height:11.2px;background:rgba(110,110,110,0.55);"></div>
<div class="r" style="left:132.2px;top:505.3px;width:1.0px;height:11.2px;background:rgba(110,110,110,0.55);"></div>
<div class="r" style="left:144.3px;top:505.3px;width:1.0px;height:11.2px;background:rgba(110,110,110,0.55);"></div>
<div class="r" style="left:156.3px;top:505.3px;width:1.0px;height:11.2px;background:rgba(110,110,110,0.55);"></div>
<div class="r" style="left:167.8px;top:505.3px;width:1.0px;height:11.2px;background:rgba(110,110,110,0.55);"></div>
<div class="r" style="left:72.6px;top:505.0px;width:96.2px;height:0.8px;background:rgba(110,110,110,0.45);"></div>
<div class="r" style="left:72.6px;top:516.0px;width:96.2px;height:0.8px;background:rgba(110,110,110,0.45);"></div>
<span class="t" style="left:178.00px;top:503.9px;font-size:12.2px;line-height:17px;transform:scaleX(0.8950);color:#2b2b2b;">Red Orange</span>
<div class="r" style="left:72.6px;top:527.9px;width:12.0px;height:11.2px;background:#323232;"></div>
<div class="r" style="left:84.6px;top:527.9px;width:12.0px;height:11.2px;background:#E5C243;"></div>
<div class="r" style="left:96.7px;top:527.9px;width:12.0px;height:11.2px;background:#A5300F;"></div>
<div class="r" style="left:108.7px;top:527.9px;width:12.0px;height:11.2px;background:#D55816;"></div>
<div class="r" style="left:120.7px;top:527.9px;width:12.0px;height:11.2px;background:#E19825;"></div>
<div class="r" style="left:132.8px;top:527.9px;width:12.0px;height:11.2px;background:#B19C7D;"></div>
<div class="r" style="left:144.8px;top:527.9px;width:12.0px;height:11.2px;background:#7F5F52;"></div>
<div class="r" style="left:156.8px;top:527.9px;width:12.0px;height:11.2px;background:#B27D49;"></div>
<div class="r" style="left:72.6px;top:527.9px;width:1.0px;height:11.2px;background:rgba(110,110,110,0.55);"></div>
<div class="r" style="left:84.1px;top:527.9px;width:1.0px;height:11.2px;background:rgba(110,110,110,0.55);"></div>
<div class="r" style="left:96.2px;top:527.9px;width:1.0px;height:11.2px;background:rgba(110,110,110,0.55);"></div>
<div class="r" style="left:108.2px;top:527.9px;width:1.0px;height:11.2px;background:rgba(110,110,110,0.55);"></div>
<div class="r" style="left:120.2px;top:527.9px;width:1.0px;height:11.2px;background:rgba(110,110,110,0.55);"></div>
<div class="r" style="left:132.2px;top:527.9px;width:1.0px;height:11.2px;background:rgba(110,110,110,0.55);"></div>
<div class="r" style="left:144.3px;top:527.9px;width:1.0px;height:11.2px;background:rgba(110,110,110,0.55);"></div>
<div class="r" style="left:156.3px;top:527.9px;width:1.0px;height:11.2px;background:rgba(110,110,110,0.55);"></div>
<div class="r" style="left:167.8px;top:527.9px;width:1.0px;height:11.2px;background:rgba(110,110,110,0.55);"></div>
<div class="r" style="left:72.6px;top:527.6px;width:96.2px;height:0.8px;background:rgba(110,110,110,0.45);"></div>
<div class="r" style="left:72.6px;top:538.6px;width:96.2px;height:0.8px;background:rgba(110,110,110,0.45);"></div>
<span class="t" style="left:178.00px;top:526.5px;font-size:12.2px;line-height:17px;transform:scaleX(0.8702);color:#2b2b2b;">Red</span>
<div class="r" style="left:72.6px;top:550.6px;width:12.0px;height:11.2px;background:#454551;"></div>
<div class="r" style="left:84.6px;top:550.6px;width:12.0px;height:11.2px;background:#D8D9DC;"></div>
<div class="r" style="left:96.7px;top:550.6px;width:12.0px;height:11.2px;background:#E32D91;"></div>
<div class="r" style="left:108.7px;top:550.6px;width:12.0px;height:11.2px;background:#C830CC;"></div>
<div class="r" style="left:120.7px;top:550.6px;width:12.0px;height:11.2px;background:#4EA6DC;"></div>
<div class="r" style="left:132.8px;top:550.6px;width:12.0px;height:11.2px;background:#4775E7;"></div>
<div class="r" style="left:144.8px;top:550.6px;width:12.0px;height:11.2px;background:#8971E1;"></div>
<div class="r" style="left:156.8px;top:550.6px;width:12.0px;height:11.2px;background:#D54773;"></div>
<div class="r" style="left:72.6px;top:550.6px;width:1.0px;height:11.2px;background:rgba(110,110,110,0.55);"></div>
<div class="r" style="left:84.1px;top:550.6px;width:1.0px;height:11.2px;background:rgba(110,110,110,0.55);"></div>
<div class="r" style="left:96.2px;top:550.6px;width:1.0px;height:11.2px;background:rgba(110,110,110,0.55);"></div>
<div class="r" style="left:108.2px;top:550.6px;width:1.0px;height:11.2px;background:rgba(110,110,110,0.55);"></div>
<div class="r" style="left:120.2px;top:550.6px;width:1.0px;height:11.2px;background:rgba(110,110,110,0.55);"></div>
<div class="r" style="left:132.2px;top:550.6px;width:1.0px;height:11.2px;background:rgba(110,110,110,0.55);"></div>
<div class="r" style="left:144.3px;top:550.6px;width:1.0px;height:11.2px;background:rgba(110,110,110,0.55);"></div>
<div class="r" style="left:156.3px;top:550.6px;width:1.0px;height:11.2px;background:rgba(110,110,110,0.55);"></div>
<div class="r" style="left:167.8px;top:550.6px;width:1.0px;height:11.2px;background:rgba(110,110,110,0.55);"></div>
<div class="r" style="left:72.6px;top:550.3px;width:96.2px;height:0.8px;background:rgba(110,110,110,0.45);"></div>
<div class="r" style="left:72.6px;top:561.3px;width:96.2px;height:0.8px;background:rgba(110,110,110,0.45);"></div>
<span class="t" style="left:178.00px;top:549.2px;font-size:12.2px;line-height:17px;transform:scaleX(0.9318);color:#2b2b2b;">Red Violet</span>
<div class="r" style="left:72.6px;top:573.2px;width:12.0px;height:11.2px;background:#373545;"></div>
<div class="r" style="left:84.6px;top:573.2px;width:12.0px;height:11.2px;background:#DCD8DC;"></div>
<div class="r" style="left:96.7px;top:573.2px;width:12.0px;height:11.2px;background:#AD84C6;"></div>
<div class="r" style="left:108.7px;top:573.2px;width:12.0px;height:11.2px;background:#8784C7;"></div>
<div class="r" style="left:120.7px;top:573.2px;width:12.0px;height:11.2px;background:#5D739A;"></div>
<div class="r" style="left:132.8px;top:573.2px;width:12.0px;height:11.2px;background:#6997AF;"></div>
<div class="r" style="left:144.8px;top:573.2px;width:12.0px;height:11.2px;background:#84ACB6;"></div>
<div class="r" style="left:156.8px;top:573.2px;width:12.0px;height:11.2px;background:#6F8183;"></div>
<div class="r" style="left:72.6px;top:573.2px;width:1.0px;height:11.2px;background:rgba(110,110,110,0.55);"></div>
<div class="r" style="left:84.1px;top:573.2px;width:1.0px;height:11.2px;background:rgba(110,110,110,0.55);"></div>
<div class="r" style="left:96.2px;top:573.2px;width:1.0px;height:11.2px;background:rgba(110,110,110,0.55);"></div>
<div class="r" style="left:108.2px;top:573.2px;width:1.0px;height:11.2px;background:rgba(110,110,110,0.55);"></div>
<div class="r" style="left:120.2px;top:573.2px;width:1.0px;height:11.2px;background:rgba(110,110,110,0.55);"></div>
<div class="r" style="left:132.2px;top:573.2px;width:1.0px;height:11.2px;background:rgba(110,110,110,0.55);"></div>
<div class="r" style="left:144.3px;top:573.2px;width:1.0px;height:11.2px;background:rgba(110,110,110,0.55);"></div>
<div class="r" style="left:156.3px;top:573.2px;width:1.0px;height:11.2px;background:rgba(110,110,110,0.55);"></div>
<div class="r" style="left:167.8px;top:573.2px;width:1.0px;height:11.2px;background:rgba(110,110,110,0.55);"></div>
<div class="r" style="left:72.6px;top:572.9px;width:96.2px;height:0.8px;background:rgba(110,110,110,0.45);"></div>
<div class="r" style="left:72.6px;top:583.9px;width:96.2px;height:0.8px;background:rgba(110,110,110,0.45);"></div>
<span class="t" style="left:178.00px;top:571.8px;font-size:12.2px;line-height:17px;transform:scaleX(0.9917);color:#2b2b2b;">Violet</span>
<div class="r" style="left:63px;top:542.4px;width:190.8px;height:27.2px;border:3.9px solid #ed1c24;box-sizing:border-box"></div>
<span class="t" style="left:95.80px;top:597.7px;font-size:12.2px;line-height:17px;transform:scaleX(0.8784);color:#2b2b2b;">Customize Colors...</span>
<div class="r" style="left:95.6px;top:611.6px;width:7.6px;height:1.0px;background:#2b2b2b;"></div>
<div class="r" style="left:169.0px;top:621.4px;width:1.2px;height:1.2px;background:#c4c4c4;"></div>
<div class="r" style="left:173.2px;top:621.4px;width:1.2px;height:1.2px;background:#c4c4c4;"></div>
<div class="r" style="left:177.4px;top:621.4px;width:1.2px;height:1.2px;background:#c4c4c4;"></div>
<div class="r" style="left:181.6px;top:621.4px;width:1.2px;height:1.2px;background:#c4c4c4;"></div>
</body></html>
